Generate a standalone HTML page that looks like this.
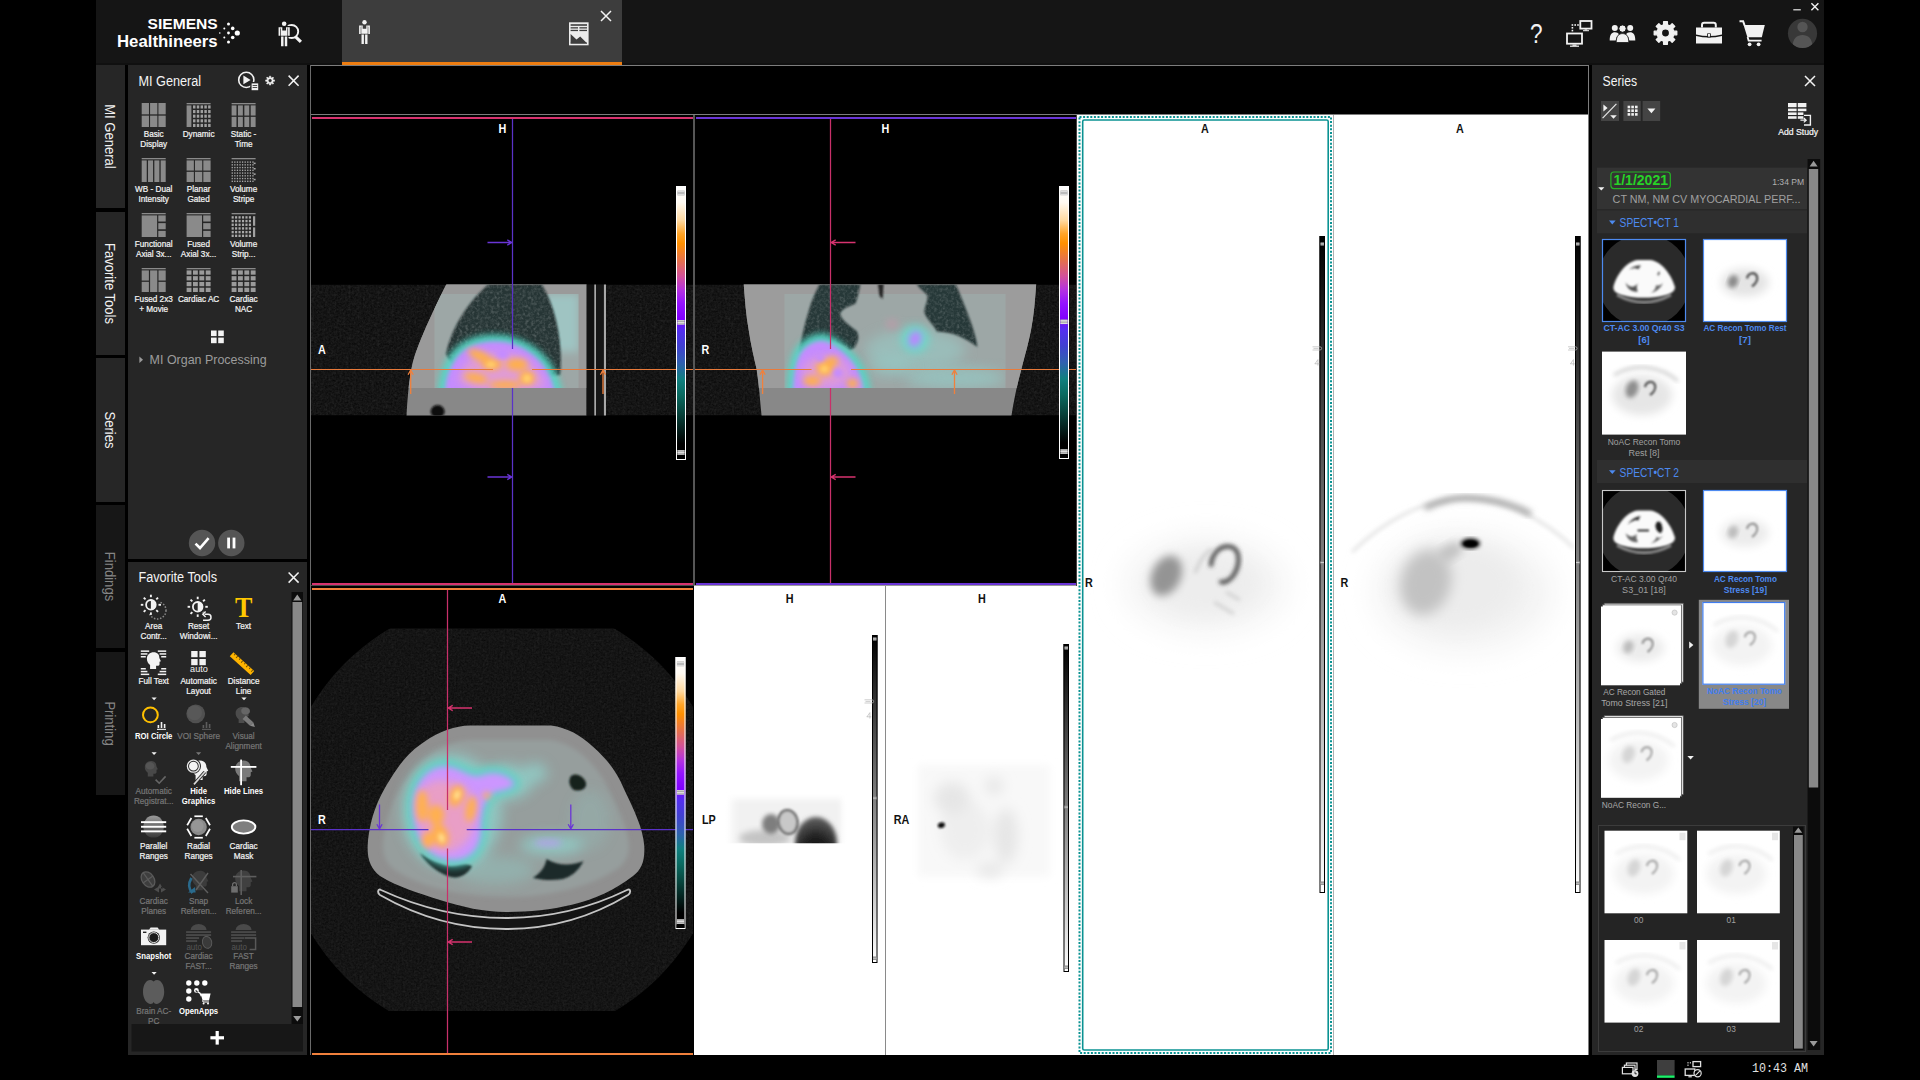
<!DOCTYPE html>
<html><head><meta charset="utf-8"><title>syngo.via MI General</title>
<style>
html,body{margin:0;padding:0;background:#000;width:1920px;height:1080px;overflow:hidden;font-family:"Liberation Sans",sans-serif;}
svg{display:block;position:absolute;left:0;top:0}
text{white-space:pre}
</style></head><body>
<svg width="1920" height="1080" viewBox="0 0 1920 1080">
<g id="p_frame">
<rect x="96" y="0" width="1728" height="65" fill="#151515" />
<rect x="96" y="63" width="1728" height="2" fill="#101010" />
<rect x="342" y="0" width="280" height="62" fill="#3d3d3d" />
<rect x="342" y="62" width="280" height="3" fill="#ee7d11" />
<rect x="96" y="65" width="29" height="143" fill="#262626" />
<g transform="translate(104.5,136.5) rotate(90)"><text x="-32.27" y="0.00" font-family="Liberation Sans, sans-serif" font-size="14.5" fill="#f2f2f2" textLength="64.54" lengthAdjust="spacingAndGlyphs" >MI General</text></g>
<rect x="96" y="212" width="29" height="143" fill="#262626" />
<g transform="translate(104.5,283.5) rotate(90)"><text x="-40.49" y="0.00" font-family="Liberation Sans, sans-serif" font-size="14.5" fill="#f2f2f2" textLength="80.99" lengthAdjust="spacingAndGlyphs" >Favorite Tools</text></g>
<rect x="96" y="358" width="29" height="144" fill="#262626" />
<g transform="translate(104.5,430.0) rotate(90)"><text x="-18.49" y="0.00" font-family="Liberation Sans, sans-serif" font-size="14.5" fill="#f2f2f2" textLength="36.99" lengthAdjust="spacingAndGlyphs" >Series</text></g>
<rect x="96" y="505" width="29" height="143" fill="#171717" />
<g transform="translate(104.5,576.5) rotate(90)"><text x="-24.66" y="0.00" font-family="Liberation Sans, sans-serif" font-size="14.5" fill="#858585" textLength="49.32" lengthAdjust="spacingAndGlyphs" >Findings</text></g>
<rect x="96" y="652" width="29" height="143" fill="#171717" />
<g transform="translate(104.5,723.5) rotate(90)"><text x="-22.12" y="0.00" font-family="Liberation Sans, sans-serif" font-size="14.5" fill="#858585" textLength="44.25" lengthAdjust="spacingAndGlyphs" >Printing</text></g>
<rect x="128" y="65" width="179" height="494" fill="#262626" />
<rect x="128" y="562" width="179" height="493" fill="#262626" />
<rect x="1592" y="65" width="232" height="990" fill="#262626" />
<rect x="310" y="65" width="1279" height="990" fill="#000" />
<rect x="310.5" y="65.5" width="1278" height="49" fill="none" stroke="#7d7d7d" stroke-width="1"/>
<line x1="310.5" y1="65" x2="310.5" y2="1055" stroke="#6a6a6a" stroke-width="1" />
</g>
<g id="p_top">
<text x="147.50" y="28.60" font-family="Liberation Sans, sans-serif" font-size="14.6" font-weight="bold" fill="#fff" textLength="70.20" lengthAdjust="spacingAndGlyphs" >SIEMENS</text>
<text x="117.00" y="46.60" font-family="Liberation Sans, sans-serif" font-size="16.6" font-weight="bold" fill="#fff" textLength="100.70" lengthAdjust="spacingAndGlyphs" >Healthineers</text>
<circle cx="228.5" cy="24" r="1.5" fill="#fff"/>
<circle cx="224.3" cy="28.4" r="1.0" fill="#fff"/>
<circle cx="232.7" cy="28.4" r="1.8" fill="#fff"/>
<circle cx="219.8" cy="33" r="0.8" fill="#fff"/>
<circle cx="228.5" cy="33" r="1.4" fill="#fff"/>
<circle cx="237.3" cy="33" r="2.6" fill="#fff"/>
<circle cx="224.3" cy="37.5" r="1.0" fill="#fff"/>
<circle cx="232.7" cy="37.5" r="1.8" fill="#fff"/>
<circle cx="228.5" cy="42" r="1.5" fill="#fff"/>
<circle cx="291.7" cy="31.5" r="6.5" fill="none" stroke="#f2f2f2" stroke-width="1.9"/>
<path d="M295.4,36.6 L300.9,41.8" stroke="#f2f2f2" stroke-width="3.2"/>
<g transform="translate(284.15,21.4) scale(1.0333333333333334)" fill="#151515" stroke="#151515" stroke-width="2.4">
<circle cx="0" cy="2.2" r="2.2"/>
<path d="M-5.4,5.6 h2.2 v1.2 h-0.6 v7.2 h-1.6z M5.4,5.6 h-2.2 v1.2 h0.6 v7.2 h1.6z"/>
<path d="M-3.2,5.6 h1.4 v3.2 h3.6 v-3.2 h1.4 v8.2 h-6.4z"/>
<path d="M-3.0,14.6 h2.4 v9.4 h-2.4z M0.6,14.6 h2.4 v9.4 h-2.4z"/>
</g>
<g transform="translate(284.15,21.4) scale(1.0333333333333334)" fill="#f2f2f2">
<circle cx="0" cy="2.2" r="2.2"/>
<path d="M-5.4,5.6 h2.2 v1.2 h-0.6 v7.2 h-1.6z M5.4,5.6 h-2.2 v1.2 h0.6 v7.2 h1.6z"/>
<path d="M-3.2,5.6 h1.4 v3.2 h3.6 v-3.2 h1.4 v8.2 h-6.4z"/>
<path d="M-3.0,14.6 h2.4 v9.4 h-2.4z M0.6,14.6 h2.4 v9.4 h-2.4z"/>
</g>
<g transform="translate(364.5,20) scale(1.0)" fill="#f2f2f2">
<circle cx="0" cy="2.2" r="2.2"/>
<path d="M-5.4,5.6 h2.2 v1.2 h-0.6 v7.2 h-1.6z M5.4,5.6 h-2.2 v1.2 h0.6 v7.2 h1.6z"/>
<path d="M-3.2,5.6 h1.4 v3.2 h3.6 v-3.2 h1.4 v8.2 h-6.4z"/>
<path d="M-3.0,14.6 h2.4 v9.4 h-2.4z M0.6,14.6 h2.4 v9.4 h-2.4z"/>
</g>
<rect x="569" y="22.3" width="19.6" height="23" fill="#ececec" />
<rect x="570.6" y="24.2" width="16.4" height="1.6" fill="#3d3d3d" />
<rect x="570.6" y="27.2" width="7.4" height="1.3" fill="#3d3d3d" />
<rect x="579.4" y="27.2" width="7.6" height="1.3" fill="#3d3d3d" />
<rect x="570.6" y="29.8" width="7.4" height="1.3" fill="#3d3d3d" />
<rect x="579.4" y="29.8" width="7.6" height="1.3" fill="#3d3d3d" />
<path d="M570.6,43.2 L570.6,34 L576.5,39.6 L580.2,36.6 L587,43.2Z" fill="#3d3d3d"/>
<rect x="570.6" y="42.6" width="16.4" height="1.1" fill="#3d3d3d" />
<path d="M601,11L611,21M611,11L601,21" stroke="#f2f2f2" stroke-width="1.5" fill="none"/>
<text x="1530.00" y="43.00" font-family="Liberation Sans, sans-serif" font-size="27" fill="#f2f2f2" textLength="12.60" lengthAdjust="spacingAndGlyphs" >?</text>
<g fill="none" stroke="#f2f2f2" stroke-width="1.8"><rect x="1567" y="33.5" width="15" height="10.2"/><rect x="1580.3" y="21" width="11.2" height="7.6"/></g>
<rect x="1572.5" y="44.6" width="4" height="1.2" fill="#f2f2f2" />
<rect x="1570" y="45.6" width="9" height="1.2" fill="#f2f2f2" />
<rect x="1584.6" y="29.4" width="2.6" height="1" fill="#f2f2f2" />
<rect x="1583" y="30.2" width="6" height="1" fill="#f2f2f2" />
<rect x="1571.6" y="24.2" width="1.6" height="1.6" fill="#f2f2f2" />
<rect x="1574.4" y="24.2" width="1.6" height="1.6" fill="#f2f2f2" />
<rect x="1577.2" y="24.2" width="1.6" height="1.6" fill="#f2f2f2" />
<rect x="1571.6" y="27" width="1.6" height="1.6" fill="#f2f2f2" />
<rect x="1571.6" y="29.8" width="1.6" height="1.6" fill="#f2f2f2" />
<g fill="#f2f2f2"><circle cx="1614.8" cy="28" r="3"/><circle cx="1630.2" cy="28" r="3"/><path d="M1609.7,40.5 C1609.7,34 1612,32.2 1614.8,32.2 C1617,32.2 1618.2,33 1619,34.2 C1617,36 1616,38 1615.8,40.5Z"/><path d="M1635.3,40.5 C1635.3,34 1633,32.2 1630.2,32.2 C1628,32.2 1626.8,33 1626,34.2 C1628,36 1629,38 1629.2,40.5Z"/><circle cx="1622.5" cy="28.6" r="3.7" stroke="#151515" stroke-width="1"/><path d="M1616.2,42.5 C1616.2,35.6 1619,33.6 1622.5,33.6 C1626,33.6 1628.8,35.6 1628.8,42.5Z" stroke="#151515" stroke-width="0.8"/></g>
<path d="M1673.73,31.14L1676.75,31.13L1676.75,34.87L1673.73,34.86L1672.64,37.50L1674.78,39.63L1672.13,42.28L1670.00,40.14L1667.36,41.23L1667.37,44.25L1663.63,44.25L1663.64,41.23L1661.00,40.14L1658.87,42.28L1656.22,39.63L1658.36,37.50L1657.27,34.86L1654.25,34.87L1654.25,31.13L1657.27,31.14L1658.36,28.50L1656.22,26.37L1658.87,23.72L1661.00,25.86L1663.64,24.77L1663.63,21.75L1667.37,21.75L1667.36,24.77L1670.00,25.86L1672.13,23.72L1674.78,26.37L1672.64,28.50ZM1669.60,33.00A4.10,4.10 0 1,0 1661.40,33.00A4.10,4.10 0 1,0 1669.60,33.00Z" fill="#f2f2f2" fill-rule="evenodd" stroke="#f2f2f2" stroke-width="1.37" stroke-linejoin="round"/>
<path d="M1702,27.5 v-2.6 q0,-2.2 2.2,-2.2 h9.4 q2.2,0 2.2,2.2 v2.6" fill="none" stroke="#f2f2f2" stroke-width="2"/>
<path d="M1696,27.5 h26 v7 q-13,3.2 -26,0z" fill="#f2f2f2"/>
<path d="M1696,36 q13,3.2 26,0 v7.6 h-26z" fill="#f2f2f2"/>
<rect x="1707.2" y="33.4" width="3.6" height="4" fill="#151515" />
<rect x="1708" y="34" width="2" height="2.6" fill="#f2f2f2" />
<path d="M1739.5,21.2 h3.6 l1.4,4" fill="none" stroke="#f2f2f2" stroke-width="2"/>
<path d="M1743.6,25 h21.2 l-3,12.2 h-14.4z" fill="#f2f2f2"/>
<path d="M1747.6,37 l1,3.6 h13" fill="none" stroke="#f2f2f2" stroke-width="1.8"/>
<circle cx="1749.6" cy="44.3" r="1.9" fill="#f2f2f2"/><circle cx="1758.6" cy="44.3" r="1.9" fill="#f2f2f2"/>
<clipPath id="av"><circle cx="1802.5" cy="33.4" r="14.6"/></clipPath>
<circle cx="1802.5" cy="33.4" r="14.6" fill="#383838"/>
<g clip-path="url(#av)" fill="#555"><circle cx="1802.5" cy="27" r="5.2"/><path d="M1792.5,48 C1792.5,38 1797,35 1802.5,35 C1808,35 1812.5,38 1812.5,48Z"/></g>
<rect x="1793.3" y="9.2" width="7.5" height="1.2" fill="#e8e8e8" />
<path d="M1811.4,3.2L1818.4,10.2M1818.4,3.2L1811.4,10.2" stroke="#f0f0f0" stroke-width="1.4" fill="none"/>
</g>
<g id="p_left">
<text x="138.40" y="85.80" font-family="Liberation Sans, sans-serif" font-size="14" fill="#f4f4f4" textLength="62.80" lengthAdjust="spacingAndGlyphs" >MI General</text>
<circle cx="246.3" cy="79.9" r="7.6" fill="none" stroke="#f2f2f2" stroke-width="1.6"/>
<path d="M243.4,75.6 L250.6,79.9 L243.4,84.2Z" fill="#f2f2f2"/>
<rect x="250.2" y="82" width="8.6" height="8.6" fill="#262626" />
<rect x="251.6" y="83.4" width="6.6" height="6.8" fill="#f2f2f2" />
<rect x="252.6" y="85.2" width="4.6" height="0.8" fill="#262626" />
<rect x="252.6" y="87.2" width="4.6" height="0.8" fill="#262626" />
<path d="M273.18,79.94L274.54,79.90L274.54,81.30L273.18,81.26L272.75,82.31L273.74,83.25L272.75,84.24L271.81,83.25L270.76,83.68L270.80,85.04L269.40,85.04L269.44,83.68L268.39,83.25L267.45,84.24L266.46,83.25L267.45,82.31L267.02,81.26L265.66,81.30L265.66,79.90L267.02,79.94L267.45,78.89L266.46,77.95L267.45,76.96L268.39,77.95L269.44,77.52L269.40,76.16L270.80,76.16L270.76,77.52L271.81,77.95L272.75,76.96L273.74,77.95L272.75,78.89ZM271.99,80.60A1.89,1.89 0 1,0 268.21,80.60A1.89,1.89 0 1,0 271.99,80.60Z" fill="#f2f2f2" fill-rule="evenodd" stroke="#f2f2f2" stroke-width="0.54" stroke-linejoin="round"/>
<path d="M288.6,75.6L298.6,85.8M298.6,75.6L288.6,85.8" stroke="#f2f2f2" stroke-width="1.5" fill="none"/>
<rect x="141.70" y="103.00" width="7.27" height="11.35" fill="#8a8a8a"/><rect x="150.07" y="103.00" width="7.27" height="11.35" fill="#8a8a8a"/><rect x="158.43" y="103.00" width="7.27" height="11.35" fill="#8a8a8a"/><rect x="141.70" y="115.65" width="7.27" height="11.35" fill="#8a8a8a"/><rect x="150.07" y="115.65" width="7.27" height="11.35" fill="#8a8a8a"/><rect x="158.43" y="115.65" width="7.27" height="11.35" fill="#8a8a8a"/>
<text x="143.69" y="136.90" font-family="Liberation Sans, sans-serif" font-size="8.8" fill="#f4f4f4" textLength="20.01" lengthAdjust="spacingAndGlyphs" stroke="#f4f4f4" stroke-width="0.22">Basic</text><text x="140.28" y="146.80" font-family="Liberation Sans, sans-serif" font-size="8.8" fill="#f4f4f4" textLength="26.83" lengthAdjust="spacingAndGlyphs" stroke="#f4f4f4" stroke-width="0.22">Display</text>
<rect x="186.6" y="103" width="24" height="1.3" fill="#8a8a8a"/><rect x="186.60" y="105.40" width="4.80" height="21.60" fill="#8a8a8a"/><rect x="193.00" y="105.40" width="2.48" height="3.12" fill="#a0a0a0"/><rect x="196.78" y="105.40" width="2.48" height="3.12" fill="#a0a0a0"/><rect x="200.56" y="105.40" width="2.48" height="3.12" fill="#a0a0a0"/><rect x="204.34" y="105.40" width="2.48" height="3.12" fill="#a0a0a0"/><rect x="208.12" y="105.40" width="2.48" height="3.12" fill="#a0a0a0"/><rect x="193.00" y="110.02" width="2.48" height="3.12" fill="#a0a0a0"/><rect x="196.78" y="110.02" width="2.48" height="3.12" fill="#a0a0a0"/><rect x="200.56" y="110.02" width="2.48" height="3.12" fill="#a0a0a0"/><rect x="204.34" y="110.02" width="2.48" height="3.12" fill="#a0a0a0"/><rect x="208.12" y="110.02" width="2.48" height="3.12" fill="#a0a0a0"/><rect x="193.00" y="114.64" width="2.48" height="3.12" fill="#a0a0a0"/><rect x="196.78" y="114.64" width="2.48" height="3.12" fill="#a0a0a0"/><rect x="200.56" y="114.64" width="2.48" height="3.12" fill="#a0a0a0"/><rect x="204.34" y="114.64" width="2.48" height="3.12" fill="#a0a0a0"/><rect x="208.12" y="114.64" width="2.48" height="3.12" fill="#a0a0a0"/><rect x="193.00" y="119.26" width="2.48" height="3.12" fill="#a0a0a0"/><rect x="196.78" y="119.26" width="2.48" height="3.12" fill="#a0a0a0"/><rect x="200.56" y="119.26" width="2.48" height="3.12" fill="#a0a0a0"/><rect x="204.34" y="119.26" width="2.48" height="3.12" fill="#a0a0a0"/><rect x="208.12" y="119.26" width="2.48" height="3.12" fill="#a0a0a0"/><rect x="193.00" y="123.88" width="2.48" height="3.12" fill="#a0a0a0"/><rect x="196.78" y="123.88" width="2.48" height="3.12" fill="#a0a0a0"/><rect x="200.56" y="123.88" width="2.48" height="3.12" fill="#a0a0a0"/><rect x="204.34" y="123.88" width="2.48" height="3.12" fill="#a0a0a0"/><rect x="208.12" y="123.88" width="2.48" height="3.12" fill="#a0a0a0"/>
<text x="182.68" y="136.90" font-family="Liberation Sans, sans-serif" font-size="8.8" fill="#f4f4f4" textLength="31.83" lengthAdjust="spacingAndGlyphs" stroke="#f4f4f4" stroke-width="0.22">Dynamic</text>
<rect x="231.6" y="103" width="24" height="1.3" fill="#8a8a8a"/><rect x="231.60" y="105.40" width="4.88" height="10.15" fill="#8a8a8a"/><rect x="237.97" y="105.40" width="4.88" height="10.15" fill="#8a8a8a"/><rect x="244.35" y="105.40" width="4.88" height="10.15" fill="#8a8a8a"/><rect x="250.72" y="105.40" width="4.88" height="10.15" fill="#8a8a8a"/><rect x="231.60" y="116.85" width="4.88" height="10.15" fill="#8a8a8a"/><rect x="237.97" y="116.85" width="4.88" height="10.15" fill="#8a8a8a"/><rect x="244.35" y="116.85" width="4.88" height="10.15" fill="#8a8a8a"/><rect x="250.72" y="116.85" width="4.88" height="10.15" fill="#8a8a8a"/>
<text x="230.87" y="136.90" font-family="Liberation Sans, sans-serif" font-size="8.8" fill="#f4f4f4" textLength="25.47" lengthAdjust="spacingAndGlyphs" stroke="#f4f4f4" stroke-width="0.22">Static -</text><text x="234.66" y="146.80" font-family="Liberation Sans, sans-serif" font-size="8.8" fill="#f4f4f4" textLength="17.88" lengthAdjust="spacingAndGlyphs" stroke="#f4f4f4" stroke-width="0.22">Time</text>
<rect x="141.7" y="158" width="24" height="1.3" fill="#8a8a8a"/><rect x="141.70" y="160.40" width="5.03" height="21.60" fill="#8a8a8a"/><rect x="148.02" y="160.40" width="5.03" height="21.60" fill="#8a8a8a"/><rect x="154.35" y="160.40" width="5.03" height="21.60" fill="#8a8a8a"/><rect x="160.67" y="160.40" width="5.03" height="21.60" fill="#8a8a8a"/>
<text x="135.06" y="191.90" font-family="Liberation Sans, sans-serif" font-size="8.8" fill="#f4f4f4" textLength="37.29" lengthAdjust="spacingAndGlyphs" stroke="#f4f4f4" stroke-width="0.22">WB - Dual</text><text x="138.46" y="201.80" font-family="Liberation Sans, sans-serif" font-size="8.8" fill="#f4f4f4" textLength="30.48" lengthAdjust="spacingAndGlyphs" stroke="#f4f4f4" stroke-width="0.22">Intensity</text>
<rect x="186.6" y="158" width="24" height="1.3" fill="#8a8a8a"/><rect x="186.60" y="160.40" width="7.27" height="10.15" fill="#8a8a8a"/><rect x="194.97" y="160.40" width="7.27" height="10.15" fill="#8a8a8a"/><rect x="203.33" y="160.40" width="7.27" height="10.15" fill="#8a8a8a"/><rect x="186.60" y="171.85" width="7.27" height="10.15" fill="#8a8a8a"/><rect x="194.97" y="171.85" width="7.27" height="10.15" fill="#8a8a8a"/><rect x="203.33" y="171.85" width="7.27" height="10.15" fill="#8a8a8a"/>
<text x="186.77" y="191.90" font-family="Liberation Sans, sans-serif" font-size="8.8" fill="#f4f4f4" textLength="23.66" lengthAdjust="spacingAndGlyphs" stroke="#f4f4f4" stroke-width="0.22">Planar</text><text x="187.45" y="201.80" font-family="Liberation Sans, sans-serif" font-size="8.8" fill="#f4f4f4" textLength="22.29" lengthAdjust="spacingAndGlyphs" stroke="#f4f4f4" stroke-width="0.22">Gated</text>
<rect x="231.6" y="158" width="24" height="1.3" fill="#8a8a8a"/><rect x="231.60" y="161.40" width="1.29" height="1.39" fill="#a8a8a8"/><rect x="234.19" y="161.40" width="1.29" height="1.39" fill="#a8a8a8"/><rect x="236.78" y="161.40" width="1.29" height="1.39" fill="#a8a8a8"/><rect x="239.37" y="161.40" width="1.29" height="1.39" fill="#a8a8a8"/><rect x="241.96" y="161.40" width="1.29" height="1.39" fill="#a8a8a8"/><rect x="244.54" y="161.40" width="1.29" height="1.39" fill="#a8a8a8"/><rect x="247.13" y="161.40" width="1.29" height="1.39" fill="#a8a8a8"/><rect x="249.72" y="161.40" width="1.29" height="1.39" fill="#a8a8a8"/><rect x="252.31" y="161.40" width="1.29" height="1.39" fill="#a8a8a8"/><rect x="231.60" y="164.14" width="1.29" height="1.39" fill="#a8a8a8"/><rect x="234.19" y="164.14" width="1.29" height="1.39" fill="#a8a8a8"/><rect x="236.78" y="164.14" width="1.29" height="1.39" fill="#a8a8a8"/><rect x="239.37" y="164.14" width="1.29" height="1.39" fill="#a8a8a8"/><rect x="241.96" y="164.14" width="1.29" height="1.39" fill="#a8a8a8"/><rect x="244.54" y="164.14" width="1.29" height="1.39" fill="#a8a8a8"/><rect x="247.13" y="164.14" width="1.29" height="1.39" fill="#a8a8a8"/><rect x="249.72" y="164.14" width="1.29" height="1.39" fill="#a8a8a8"/><rect x="252.31" y="164.14" width="1.29" height="1.39" fill="#a8a8a8"/><rect x="231.60" y="166.89" width="1.29" height="1.39" fill="#a8a8a8"/><rect x="234.19" y="166.89" width="1.29" height="1.39" fill="#a8a8a8"/><rect x="236.78" y="166.89" width="1.29" height="1.39" fill="#a8a8a8"/><rect x="239.37" y="166.89" width="1.29" height="1.39" fill="#a8a8a8"/><rect x="241.96" y="166.89" width="1.29" height="1.39" fill="#a8a8a8"/><rect x="244.54" y="166.89" width="1.29" height="1.39" fill="#a8a8a8"/><rect x="247.13" y="166.89" width="1.29" height="1.39" fill="#a8a8a8"/><rect x="249.72" y="166.89" width="1.29" height="1.39" fill="#a8a8a8"/><rect x="252.31" y="166.89" width="1.29" height="1.39" fill="#a8a8a8"/><rect x="231.60" y="169.63" width="1.29" height="1.39" fill="#a8a8a8"/><rect x="234.19" y="169.63" width="1.29" height="1.39" fill="#a8a8a8"/><rect x="236.78" y="169.63" width="1.29" height="1.39" fill="#a8a8a8"/><rect x="239.37" y="169.63" width="1.29" height="1.39" fill="#a8a8a8"/><rect x="241.96" y="169.63" width="1.29" height="1.39" fill="#a8a8a8"/><rect x="244.54" y="169.63" width="1.29" height="1.39" fill="#a8a8a8"/><rect x="247.13" y="169.63" width="1.29" height="1.39" fill="#a8a8a8"/><rect x="249.72" y="169.63" width="1.29" height="1.39" fill="#a8a8a8"/><rect x="252.31" y="169.63" width="1.29" height="1.39" fill="#a8a8a8"/><rect x="231.60" y="172.38" width="1.29" height="1.39" fill="#a8a8a8"/><rect x="234.19" y="172.38" width="1.29" height="1.39" fill="#a8a8a8"/><rect x="236.78" y="172.38" width="1.29" height="1.39" fill="#a8a8a8"/><rect x="239.37" y="172.38" width="1.29" height="1.39" fill="#a8a8a8"/><rect x="241.96" y="172.38" width="1.29" height="1.39" fill="#a8a8a8"/><rect x="244.54" y="172.38" width="1.29" height="1.39" fill="#a8a8a8"/><rect x="247.13" y="172.38" width="1.29" height="1.39" fill="#a8a8a8"/><rect x="249.72" y="172.38" width="1.29" height="1.39" fill="#a8a8a8"/><rect x="252.31" y="172.38" width="1.29" height="1.39" fill="#a8a8a8"/><rect x="231.60" y="175.12" width="1.29" height="1.39" fill="#a8a8a8"/><rect x="234.19" y="175.12" width="1.29" height="1.39" fill="#a8a8a8"/><rect x="236.78" y="175.12" width="1.29" height="1.39" fill="#a8a8a8"/><rect x="239.37" y="175.12" width="1.29" height="1.39" fill="#a8a8a8"/><rect x="241.96" y="175.12" width="1.29" height="1.39" fill="#a8a8a8"/><rect x="244.54" y="175.12" width="1.29" height="1.39" fill="#a8a8a8"/><rect x="247.13" y="175.12" width="1.29" height="1.39" fill="#a8a8a8"/><rect x="249.72" y="175.12" width="1.29" height="1.39" fill="#a8a8a8"/><rect x="252.31" y="175.12" width="1.29" height="1.39" fill="#a8a8a8"/><rect x="231.60" y="177.86" width="1.29" height="1.39" fill="#a8a8a8"/><rect x="234.19" y="177.86" width="1.29" height="1.39" fill="#a8a8a8"/><rect x="236.78" y="177.86" width="1.29" height="1.39" fill="#a8a8a8"/><rect x="239.37" y="177.86" width="1.29" height="1.39" fill="#a8a8a8"/><rect x="241.96" y="177.86" width="1.29" height="1.39" fill="#a8a8a8"/><rect x="244.54" y="177.86" width="1.29" height="1.39" fill="#a8a8a8"/><rect x="247.13" y="177.86" width="1.29" height="1.39" fill="#a8a8a8"/><rect x="249.72" y="177.86" width="1.29" height="1.39" fill="#a8a8a8"/><rect x="252.31" y="177.86" width="1.29" height="1.39" fill="#a8a8a8"/><rect x="231.60" y="180.61" width="1.29" height="1.39" fill="#a8a8a8"/><rect x="234.19" y="180.61" width="1.29" height="1.39" fill="#a8a8a8"/><rect x="236.78" y="180.61" width="1.29" height="1.39" fill="#a8a8a8"/><rect x="239.37" y="180.61" width="1.29" height="1.39" fill="#a8a8a8"/><rect x="241.96" y="180.61" width="1.29" height="1.39" fill="#a8a8a8"/><rect x="244.54" y="180.61" width="1.29" height="1.39" fill="#a8a8a8"/><rect x="247.13" y="180.61" width="1.29" height="1.39" fill="#a8a8a8"/><rect x="249.72" y="180.61" width="1.29" height="1.39" fill="#a8a8a8"/><rect x="252.31" y="180.61" width="1.29" height="1.39" fill="#a8a8a8"/><rect x="253.60" y="162.60" width="2.00" height="1.50" fill="#a8a8a8"/><rect x="253.60" y="168.00" width="2.00" height="1.50" fill="#a8a8a8"/><rect x="253.60" y="173.40" width="2.00" height="1.50" fill="#a8a8a8"/><rect x="253.60" y="178.80" width="2.00" height="1.50" fill="#a8a8a8"/>
<text x="229.95" y="191.90" font-family="Liberation Sans, sans-serif" font-size="8.8" fill="#f4f4f4" textLength="27.30" lengthAdjust="spacingAndGlyphs" stroke="#f4f4f4" stroke-width="0.22">Volume</text><text x="232.91" y="201.80" font-family="Liberation Sans, sans-serif" font-size="8.8" fill="#f4f4f4" textLength="21.38" lengthAdjust="spacingAndGlyphs" stroke="#f4f4f4" stroke-width="0.22">Stripe</text>
<rect x="141.7" y="213" width="24" height="1.3" fill="#8a8a8a"/><rect x="141.70" y="215.40" width="15.40" height="21.60" fill="#8a8a8a"/><rect x="158.30" y="215.40" width="7.40" height="6.13" fill="#8a8a8a"/><rect x="158.30" y="223.13" width="7.40" height="6.13" fill="#8a8a8a"/><rect x="158.30" y="230.87" width="7.40" height="6.13" fill="#8a8a8a"/>
<text x="134.82" y="246.90" font-family="Liberation Sans, sans-serif" font-size="8.8" fill="#f4f4f4" textLength="37.76" lengthAdjust="spacingAndGlyphs" stroke="#f4f4f4" stroke-width="0.22">Functional</text><text x="135.96" y="256.80" font-family="Liberation Sans, sans-serif" font-size="8.8" fill="#f4f4f4" textLength="35.48" lengthAdjust="spacingAndGlyphs" stroke="#f4f4f4" stroke-width="0.22">Axial 3x...</text>
<rect x="186.6" y="213" width="24" height="1.3" fill="#8a8a8a"/><rect x="186.60" y="215.40" width="15.40" height="21.60" fill="#8a8a8a"/><rect x="203.20" y="215.40" width="7.40" height="6.13" fill="#8a8a8a"/><rect x="203.20" y="223.13" width="7.40" height="6.13" fill="#8a8a8a"/><rect x="203.20" y="230.87" width="7.40" height="6.13" fill="#8a8a8a"/>
<text x="187.23" y="246.90" font-family="Liberation Sans, sans-serif" font-size="8.8" fill="#f4f4f4" textLength="22.74" lengthAdjust="spacingAndGlyphs" stroke="#f4f4f4" stroke-width="0.22">Fused</text><text x="180.86" y="256.80" font-family="Liberation Sans, sans-serif" font-size="8.8" fill="#f4f4f4" textLength="35.48" lengthAdjust="spacingAndGlyphs" stroke="#f4f4f4" stroke-width="0.22">Axial 3x...</text>
<rect x="231.6" y="213" width="24" height="1.3" fill="#8a8a8a"/><rect x="231.60" y="216.20" width="2.15" height="2.38" fill="#a8a8a8"/><rect x="235.05" y="216.20" width="2.15" height="2.38" fill="#a8a8a8"/><rect x="238.50" y="216.20" width="2.15" height="2.38" fill="#a8a8a8"/><rect x="241.95" y="216.20" width="2.15" height="2.38" fill="#a8a8a8"/><rect x="245.40" y="216.20" width="2.15" height="2.38" fill="#a8a8a8"/><rect x="248.85" y="216.20" width="2.15" height="2.38" fill="#a8a8a8"/><rect x="231.60" y="219.88" width="2.15" height="2.38" fill="#a8a8a8"/><rect x="235.05" y="219.88" width="2.15" height="2.38" fill="#a8a8a8"/><rect x="238.50" y="219.88" width="2.15" height="2.38" fill="#a8a8a8"/><rect x="241.95" y="219.88" width="2.15" height="2.38" fill="#a8a8a8"/><rect x="245.40" y="219.88" width="2.15" height="2.38" fill="#a8a8a8"/><rect x="248.85" y="219.88" width="2.15" height="2.38" fill="#a8a8a8"/><rect x="231.60" y="223.57" width="2.15" height="2.38" fill="#a8a8a8"/><rect x="235.05" y="223.57" width="2.15" height="2.38" fill="#a8a8a8"/><rect x="238.50" y="223.57" width="2.15" height="2.38" fill="#a8a8a8"/><rect x="241.95" y="223.57" width="2.15" height="2.38" fill="#a8a8a8"/><rect x="245.40" y="223.57" width="2.15" height="2.38" fill="#a8a8a8"/><rect x="248.85" y="223.57" width="2.15" height="2.38" fill="#a8a8a8"/><rect x="231.60" y="227.25" width="2.15" height="2.38" fill="#a8a8a8"/><rect x="235.05" y="227.25" width="2.15" height="2.38" fill="#a8a8a8"/><rect x="238.50" y="227.25" width="2.15" height="2.38" fill="#a8a8a8"/><rect x="241.95" y="227.25" width="2.15" height="2.38" fill="#a8a8a8"/><rect x="245.40" y="227.25" width="2.15" height="2.38" fill="#a8a8a8"/><rect x="248.85" y="227.25" width="2.15" height="2.38" fill="#a8a8a8"/><rect x="231.60" y="230.93" width="2.15" height="2.38" fill="#a8a8a8"/><rect x="235.05" y="230.93" width="2.15" height="2.38" fill="#a8a8a8"/><rect x="238.50" y="230.93" width="2.15" height="2.38" fill="#a8a8a8"/><rect x="241.95" y="230.93" width="2.15" height="2.38" fill="#a8a8a8"/><rect x="245.40" y="230.93" width="2.15" height="2.38" fill="#a8a8a8"/><rect x="248.85" y="230.93" width="2.15" height="2.38" fill="#a8a8a8"/><rect x="231.60" y="234.62" width="2.15" height="2.38" fill="#a8a8a8"/><rect x="235.05" y="234.62" width="2.15" height="2.38" fill="#a8a8a8"/><rect x="238.50" y="234.62" width="2.15" height="2.38" fill="#a8a8a8"/><rect x="241.95" y="234.62" width="2.15" height="2.38" fill="#a8a8a8"/><rect x="245.40" y="234.62" width="2.15" height="2.38" fill="#a8a8a8"/><rect x="248.85" y="234.62" width="2.15" height="2.38" fill="#a8a8a8"/><rect x="253.00" y="216.20" width="2.20" height="9.60" fill="#a0a0a0"/><rect x="253.00" y="227.40" width="2.20" height="9.60" fill="#a0a0a0"/>
<text x="229.95" y="246.90" font-family="Liberation Sans, sans-serif" font-size="8.8" fill="#f4f4f4" textLength="27.30" lengthAdjust="spacingAndGlyphs" stroke="#f4f4f4" stroke-width="0.22">Volume</text><text x="231.78" y="256.80" font-family="Liberation Sans, sans-serif" font-size="8.8" fill="#f4f4f4" textLength="23.65" lengthAdjust="spacingAndGlyphs" stroke="#f4f4f4" stroke-width="0.22">Strip...</text>
<rect x="141.7" y="268" width="24" height="1.3" fill="#8a8a8a"/><rect x="141.70" y="270.40" width="7.20" height="10.15" fill="#8a8a8a"/><rect x="158.50" y="270.40" width="7.20" height="10.15" fill="#8a8a8a"/><rect x="141.70" y="281.85" width="7.20" height="10.15" fill="#8a8a8a"/><rect x="158.50" y="281.85" width="7.20" height="10.15" fill="#8a8a8a"/><rect x="150.10" y="270.40" width="7.20" height="21.60" fill="#8a8a8a"/>
<text x="134.59" y="301.90" font-family="Liberation Sans, sans-serif" font-size="8.8" fill="#f4f4f4" textLength="38.21" lengthAdjust="spacingAndGlyphs" stroke="#f4f4f4" stroke-width="0.22">Fused 2x3</text><text x="139.26" y="311.80" font-family="Liberation Sans, sans-serif" font-size="8.8" fill="#f4f4f4" textLength="28.88" lengthAdjust="spacingAndGlyphs" stroke="#f4f4f4" stroke-width="0.22">+ Movie</text>
<rect x="186.6" y="268" width="24" height="1.3" fill="#8a8a8a"/><rect x="186.60" y="270.40" width="4.88" height="4.28" fill="#9a9a9a"/><rect x="192.97" y="270.40" width="4.88" height="4.28" fill="#9a9a9a"/><rect x="199.35" y="270.40" width="4.88" height="4.28" fill="#9a9a9a"/><rect x="205.72" y="270.40" width="4.88" height="4.28" fill="#9a9a9a"/><rect x="186.60" y="276.17" width="4.88" height="4.28" fill="#9a9a9a"/><rect x="192.97" y="276.17" width="4.88" height="4.28" fill="#9a9a9a"/><rect x="199.35" y="276.17" width="4.88" height="4.28" fill="#9a9a9a"/><rect x="205.72" y="276.17" width="4.88" height="4.28" fill="#9a9a9a"/><rect x="186.60" y="281.95" width="4.88" height="4.28" fill="#9a9a9a"/><rect x="192.97" y="281.95" width="4.88" height="4.28" fill="#9a9a9a"/><rect x="199.35" y="281.95" width="4.88" height="4.28" fill="#9a9a9a"/><rect x="205.72" y="281.95" width="4.88" height="4.28" fill="#9a9a9a"/><rect x="186.60" y="287.72" width="4.88" height="4.28" fill="#9a9a9a"/><rect x="192.97" y="287.72" width="4.88" height="4.28" fill="#9a9a9a"/><rect x="199.35" y="287.72" width="4.88" height="4.28" fill="#9a9a9a"/><rect x="205.72" y="287.72" width="4.88" height="4.28" fill="#9a9a9a"/>
<text x="177.90" y="301.90" font-family="Liberation Sans, sans-serif" font-size="8.8" fill="#f4f4f4" textLength="41.39" lengthAdjust="spacingAndGlyphs" stroke="#f4f4f4" stroke-width="0.22">Cardiac AC</text>
<rect x="231.6" y="268" width="24" height="1.3" fill="#8a8a8a"/><rect x="231.60" y="270.40" width="4.88" height="4.28" fill="#9a9a9a"/><rect x="237.97" y="270.40" width="4.88" height="4.28" fill="#9a9a9a"/><rect x="244.35" y="270.40" width="4.88" height="4.28" fill="#9a9a9a"/><rect x="250.72" y="270.40" width="4.88" height="4.28" fill="#9a9a9a"/><rect x="231.60" y="276.17" width="4.88" height="4.28" fill="#9a9a9a"/><rect x="237.97" y="276.17" width="4.88" height="4.28" fill="#9a9a9a"/><rect x="244.35" y="276.17" width="4.88" height="4.28" fill="#9a9a9a"/><rect x="250.72" y="276.17" width="4.88" height="4.28" fill="#9a9a9a"/><rect x="231.60" y="281.95" width="4.88" height="4.28" fill="#9a9a9a"/><rect x="237.97" y="281.95" width="4.88" height="4.28" fill="#9a9a9a"/><rect x="244.35" y="281.95" width="4.88" height="4.28" fill="#9a9a9a"/><rect x="250.72" y="281.95" width="4.88" height="4.28" fill="#9a9a9a"/><rect x="231.60" y="287.72" width="4.88" height="4.28" fill="#9a9a9a"/><rect x="237.97" y="287.72" width="4.88" height="4.28" fill="#9a9a9a"/><rect x="244.35" y="287.72" width="4.88" height="4.28" fill="#9a9a9a"/><rect x="250.72" y="287.72" width="4.88" height="4.28" fill="#9a9a9a"/>
<text x="229.50" y="301.90" font-family="Liberation Sans, sans-serif" font-size="8.8" fill="#f4f4f4" textLength="28.20" lengthAdjust="spacingAndGlyphs" stroke="#f4f4f4" stroke-width="0.22">Cardiac</text><text x="234.96" y="311.80" font-family="Liberation Sans, sans-serif" font-size="8.8" fill="#f4f4f4" textLength="17.28" lengthAdjust="spacingAndGlyphs" stroke="#f4f4f4" stroke-width="0.22">NAC</text>
<rect x="211" y="330.5" width="5.6" height="5.6" fill="#f2f2f2" />
<rect x="218.2" y="330.5" width="5.6" height="5.6" fill="#f2f2f2" />
<rect x="211" y="337.6" width="5.6" height="5.6" fill="#f2f2f2" />
<rect x="218.2" y="337.6" width="5.6" height="5.6" fill="#f2f2f2" />
<path d="M139.4,356.6 l3.6,3.2 l-3.6,3.2z" fill="#9a9a9a"/>
<text x="149.60" y="364.20" font-family="Liberation Sans, sans-serif" font-size="13.6" fill="#9c9c9c" textLength="117.00" lengthAdjust="spacingAndGlyphs" >MI Organ Processing</text>
<circle cx="202" cy="543" r="13.2" fill="#555"/><circle cx="231.3" cy="543" r="13.2" fill="#555"/>
<path d="M195.5,543.6 L200,548 L208.6,538.2" fill="none" stroke="#fff" stroke-width="2.6"/>
<rect x="227.2" y="537.6" width="2.8" height="10.8" fill="#fff" />
<rect x="232.6" y="537.6" width="2.8" height="10.8" fill="#fff" />
<text x="138.40" y="582.40" font-family="Liberation Sans, sans-serif" font-size="14" fill="#f4f4f4" textLength="78.60" lengthAdjust="spacingAndGlyphs" >Favorite Tools</text>
<path d="M288.6,572.4L298.6,582.6M298.6,572.4L288.6,582.6" stroke="#f2f2f2" stroke-width="1.5" fill="none"/>
<rect x="291.5" y="592" width="11.5" height="432" fill="#0c0c0c" />
<rect x="292.5" y="602" width="9.6" height="405" fill="#888" />
<path d="M293.2,600.6 L297.3,594.6 L301.4,600.6Z" fill="#9a9a9a"/>
<path d="M293.2,1016 L297.3,1021.4 L301.4,1016Z" fill="#9a9a9a"/>
<rect x="131.5" y="1024" width="171.5" height="27.5" fill="#171717" />
<rect x="215.6" y="1031" width="3.2" height="13.6" fill="#fff" />
<rect x="210.4" y="1036.2" width="13.6" height="3.2" fill="#fff" />
<text x="145.06" y="629.00" font-family="Liberation Sans, sans-serif" font-size="8.8" fill="#f4f4f4" textLength="17.29" lengthAdjust="spacingAndGlyphs" stroke="#f4f4f4" stroke-width="0.22">Area</text><text x="140.51" y="638.90" font-family="Liberation Sans, sans-serif" font-size="8.8" fill="#f4f4f4" textLength="26.38" lengthAdjust="spacingAndGlyphs" stroke="#f4f4f4" stroke-width="0.22">Contr...</text>
<text x="187.91" y="629.00" font-family="Liberation Sans, sans-serif" font-size="8.8" fill="#f4f4f4" textLength="21.38" lengthAdjust="spacingAndGlyphs" stroke="#f4f4f4" stroke-width="0.22">Reset</text><text x="179.73" y="638.90" font-family="Liberation Sans, sans-serif" font-size="8.8" fill="#f4f4f4" textLength="37.75" lengthAdjust="spacingAndGlyphs" stroke="#f4f4f4" stroke-width="0.22">Windowi...</text>
<text x="236.10" y="629.00" font-family="Liberation Sans, sans-serif" font-size="8.8" fill="#f4f4f4" textLength="15.01" lengthAdjust="spacingAndGlyphs" stroke="#f4f4f4" stroke-width="0.22">Text</text>
<text x="138.54" y="684.00" font-family="Liberation Sans, sans-serif" font-size="8.8" fill="#f4f4f4" textLength="30.32" lengthAdjust="spacingAndGlyphs" stroke="#f4f4f4" stroke-width="0.22">Full Text</text>
<text x="180.41" y="684.00" font-family="Liberation Sans, sans-serif" font-size="8.8" fill="#f4f4f4" textLength="36.39" lengthAdjust="spacingAndGlyphs" stroke="#f4f4f4" stroke-width="0.22">Automatic</text><text x="186.32" y="693.90" font-family="Liberation Sans, sans-serif" font-size="8.8" fill="#f4f4f4" textLength="24.57" lengthAdjust="spacingAndGlyphs" stroke="#f4f4f4" stroke-width="0.22">Layout</text>
<text x="227.68" y="684.00" font-family="Liberation Sans, sans-serif" font-size="8.8" fill="#f4f4f4" textLength="31.84" lengthAdjust="spacingAndGlyphs" stroke="#f4f4f4" stroke-width="0.22">Distance</text><text x="235.86" y="693.90" font-family="Liberation Sans, sans-serif" font-size="8.8" fill="#f4f4f4" textLength="15.47" lengthAdjust="spacingAndGlyphs" stroke="#f4f4f4" stroke-width="0.22">Line</text>
<text x="134.99" y="739.00" font-family="Liberation Sans, sans-serif" font-size="8.6" font-weight="bold" fill="#fff" textLength="37.42" lengthAdjust="spacingAndGlyphs" >ROI Circle</text>
<text x="177.22" y="739.00" font-family="Liberation Sans, sans-serif" font-size="8.8" fill="#777" textLength="42.76" lengthAdjust="spacingAndGlyphs" stroke="#777" stroke-width="0.22">VOI Sphere</text>
<text x="232.53" y="739.00" font-family="Liberation Sans, sans-serif" font-size="8.8" fill="#777" textLength="22.14" lengthAdjust="spacingAndGlyphs" stroke="#777" stroke-width="0.22">Visual</text><text x="225.40" y="748.90" font-family="Liberation Sans, sans-serif" font-size="8.8" fill="#777" textLength="36.39" lengthAdjust="spacingAndGlyphs" stroke="#777" stroke-width="0.22">Alignment</text>
<text x="135.51" y="794.00" font-family="Liberation Sans, sans-serif" font-size="8.8" fill="#777" textLength="36.39" lengthAdjust="spacingAndGlyphs" stroke="#777" stroke-width="0.22">Automatic</text><text x="133.92" y="803.90" font-family="Liberation Sans, sans-serif" font-size="8.8" fill="#777" textLength="39.57" lengthAdjust="spacingAndGlyphs" stroke="#777" stroke-width="0.22">Registrat...</text>
<text x="190.21" y="794.00" font-family="Liberation Sans, sans-serif" font-size="8.6" font-weight="bold" fill="#fff" textLength="16.77" lengthAdjust="spacingAndGlyphs" >Hide</text><text x="181.82" y="803.90" font-family="Liberation Sans, sans-serif" font-size="8.6" font-weight="bold" fill="#fff" textLength="33.55" lengthAdjust="spacingAndGlyphs" >Graphics</text>
<text x="224.03" y="794.00" font-family="Liberation Sans, sans-serif" font-size="8.6" font-weight="bold" fill="#fff" textLength="39.14" lengthAdjust="spacingAndGlyphs" >Hide Lines</text>
<text x="140.05" y="849.00" font-family="Liberation Sans, sans-serif" font-size="8.8" fill="#f4f4f4" textLength="27.29" lengthAdjust="spacingAndGlyphs" stroke="#f4f4f4" stroke-width="0.22">Parallel</text><text x="139.60" y="858.90" font-family="Liberation Sans, sans-serif" font-size="8.8" fill="#f4f4f4" textLength="28.21" lengthAdjust="spacingAndGlyphs" stroke="#f4f4f4" stroke-width="0.22">Ranges</text>
<text x="187.00" y="849.00" font-family="Liberation Sans, sans-serif" font-size="8.8" fill="#f4f4f4" textLength="23.20" lengthAdjust="spacingAndGlyphs" stroke="#f4f4f4" stroke-width="0.22">Radial</text><text x="184.50" y="858.90" font-family="Liberation Sans, sans-serif" font-size="8.8" fill="#f4f4f4" textLength="28.21" lengthAdjust="spacingAndGlyphs" stroke="#f4f4f4" stroke-width="0.22">Ranges</text>
<text x="229.50" y="849.00" font-family="Liberation Sans, sans-serif" font-size="8.8" fill="#f4f4f4" textLength="28.20" lengthAdjust="spacingAndGlyphs" stroke="#f4f4f4" stroke-width="0.22">Cardiac</text><text x="233.82" y="858.90" font-family="Liberation Sans, sans-serif" font-size="8.8" fill="#f4f4f4" textLength="19.55" lengthAdjust="spacingAndGlyphs" stroke="#f4f4f4" stroke-width="0.22">Mask</text>
<text x="139.60" y="904.00" font-family="Liberation Sans, sans-serif" font-size="8.8" fill="#777" textLength="28.20" lengthAdjust="spacingAndGlyphs" stroke="#777" stroke-width="0.22">Cardiac</text><text x="141.19" y="913.90" font-family="Liberation Sans, sans-serif" font-size="8.8" fill="#777" textLength="25.02" lengthAdjust="spacingAndGlyphs" stroke="#777" stroke-width="0.22">Planes</text>
<text x="189.04" y="904.00" font-family="Liberation Sans, sans-serif" font-size="8.8" fill="#777" textLength="19.11" lengthAdjust="spacingAndGlyphs" stroke="#777" stroke-width="0.22">Snap</text><text x="180.63" y="913.90" font-family="Liberation Sans, sans-serif" font-size="8.8" fill="#777" textLength="35.93" lengthAdjust="spacingAndGlyphs" stroke="#777" stroke-width="0.22">Referen...</text>
<text x="234.96" y="904.00" font-family="Liberation Sans, sans-serif" font-size="8.8" fill="#777" textLength="17.29" lengthAdjust="spacingAndGlyphs" stroke="#777" stroke-width="0.22">Lock</text><text x="225.63" y="913.90" font-family="Liberation Sans, sans-serif" font-size="8.8" fill="#777" textLength="35.93" lengthAdjust="spacingAndGlyphs" stroke="#777" stroke-width="0.22">Referen...</text>
<text x="136.07" y="959.00" font-family="Liberation Sans, sans-serif" font-size="8.6" font-weight="bold" fill="#fff" textLength="35.26" lengthAdjust="spacingAndGlyphs" >Snapshot</text>
<text x="184.50" y="959.00" font-family="Liberation Sans, sans-serif" font-size="8.8" fill="#777" textLength="28.20" lengthAdjust="spacingAndGlyphs" stroke="#777" stroke-width="0.22">Cardiac</text><text x="185.41" y="968.90" font-family="Liberation Sans, sans-serif" font-size="8.8" fill="#777" textLength="26.38" lengthAdjust="spacingAndGlyphs" stroke="#777" stroke-width="0.22">FAST...</text>
<text x="233.37" y="959.00" font-family="Liberation Sans, sans-serif" font-size="8.8" fill="#777" textLength="20.46" lengthAdjust="spacingAndGlyphs" stroke="#777" stroke-width="0.22">FAST</text><text x="229.50" y="968.90" font-family="Liberation Sans, sans-serif" font-size="8.8" fill="#777" textLength="28.21" lengthAdjust="spacingAndGlyphs" stroke="#777" stroke-width="0.22">Ranges</text>
<text x="136.19" y="1014.00" font-family="Liberation Sans, sans-serif" font-size="8.8" fill="#777" textLength="35.02" lengthAdjust="spacingAndGlyphs" stroke="#777" stroke-width="0.22">Brain AC-</text><text x="148.02" y="1023.90" font-family="Liberation Sans, sans-serif" font-size="8.8" fill="#777" textLength="11.37" lengthAdjust="spacingAndGlyphs" stroke="#777" stroke-width="0.22">PC</text>
<text x="179.04" y="1014.00" font-family="Liberation Sans, sans-serif" font-size="8.6" font-weight="bold" fill="#fff" textLength="39.13" lengthAdjust="spacingAndGlyphs" >OpenApps</text>
<path d="M151.5,697.4 h5.2 l-2.6,2.8z" fill="#f2f2f2"/>
<path d="M241.4,697.4 h5.2 l-2.6,2.8z" fill="#f2f2f2"/>
<path d="M151.5,752.2 h5.2 l-2.6,2.8z" fill="#f2f2f2"/>
<path d="M196.0,752.2 h5.2 l-2.6,2.8z" fill="#777"/>
<path d="M151.5,972 h5.2 l-2.6,2.8z" fill="#f2f2f2"/>
<circle cx="157.4" cy="610.4" r="8.6" fill="none" stroke="#8a8a8a" stroke-width="1.5" stroke-dasharray="1.5 1.6"/>
<circle cx="150.9" cy="604.8" r="8.6" fill="#262626"/>
<circle cx="150.9" cy="604.8" r="4.8" fill="none" stroke="#f2f2f2" stroke-width="1.8"/><line x1="158.50" y1="604.80" x2="161.00" y2="604.80" stroke="#f2f2f2" stroke-width="1.9"/><line x1="156.27" y1="610.17" x2="158.04" y2="611.94" stroke="#f2f2f2" stroke-width="1.9"/><line x1="150.90" y1="612.40" x2="150.90" y2="614.90" stroke="#f2f2f2" stroke-width="1.9"/><line x1="145.53" y1="610.17" x2="143.76" y2="611.94" stroke="#f2f2f2" stroke-width="1.9"/><line x1="143.30" y1="604.80" x2="140.80" y2="604.80" stroke="#f2f2f2" stroke-width="1.9"/><line x1="145.53" y1="599.43" x2="143.76" y2="597.66" stroke="#f2f2f2" stroke-width="1.9"/><line x1="150.90" y1="597.20" x2="150.90" y2="594.70" stroke="#f2f2f2" stroke-width="1.9"/><line x1="156.27" y1="599.43" x2="158.04" y2="597.66" stroke="#f2f2f2" stroke-width="1.9"/>
<path d="M150.9,599.6 A5.2,5.2 0 0,1 150.9,610 Z" fill="#f2f2f2"/>
<circle cx="197.7" cy="606.8" r="4.8" fill="none" stroke="#f2f2f2" stroke-width="1.8"/><line x1="205.30" y1="606.80" x2="207.80" y2="606.80" stroke="#f2f2f2" stroke-width="1.9"/><line x1="203.07" y1="612.17" x2="204.84" y2="613.94" stroke="#f2f2f2" stroke-width="1.9"/><line x1="197.70" y1="614.40" x2="197.70" y2="616.90" stroke="#f2f2f2" stroke-width="1.9"/><line x1="192.33" y1="612.17" x2="190.56" y2="613.94" stroke="#f2f2f2" stroke-width="1.9"/><line x1="190.10" y1="606.80" x2="187.60" y2="606.80" stroke="#f2f2f2" stroke-width="1.9"/><line x1="192.33" y1="601.43" x2="190.56" y2="599.66" stroke="#f2f2f2" stroke-width="1.9"/><line x1="197.70" y1="599.20" x2="197.70" y2="596.70" stroke="#f2f2f2" stroke-width="1.9"/><line x1="203.07" y1="601.43" x2="204.84" y2="599.66" stroke="#f2f2f2" stroke-width="1.9"/>
<path d="M197.7,601.6 A5.2,5.2 0 0,1 197.7,612 Z" fill="#f2f2f2"/>
<circle cx="207" cy="616.2" r="5.2" fill="#262626"/>
<path d="M203,620.2 h5 a3,3 0 0,0 0,-6 h-3.4" fill="none" stroke="#f2f2f2" stroke-width="1.5"/><path d="M205.6,611.4 l-2.8,2.8 l2.8,2.8" fill="none" stroke="#f2f2f2" stroke-width="1.4"/>
<text x="234.90" y="617.40" font-family="Liberation Serif, serif" font-size="30" font-weight="bold" fill="#ffc800" textLength="17.40" lengthAdjust="spacingAndGlyphs" font-family="Liberation Serif, serif">T</text>
<path d="M1.5,7.5 C1.5,3 5,0 9.5,0 C13.5,0 16,2.6 16,6.6 L17.8,10.4 L16.2,11 L16.2,13.6 C16.2,15.2 15.2,15.8 13.4,15.8 L12.2,15.8 L12.2,19.5 L5.2,19.5 L5.2,14.8 C2.8,12.8 1.5,10.6 1.5,7.5Z" transform="translate(145.6,652.2) scale(0.86)" fill="#f2f2f2" />
<rect x="140.8" y="650.4" width="8.4" height="1.5" fill="#f2f2f2" />
<rect x="140.8" y="653.2" width="6.6" height="1.5" fill="#f2f2f2" />
<rect x="140.8" y="656" width="5" height="1.5" fill="#f2f2f2" />
<rect x="157.8" y="650.4" width="8.4" height="1.5" fill="#f2f2f2" />
<rect x="159.6" y="653.2" width="6.6" height="1.5" fill="#f2f2f2" />
<rect x="161.2" y="656" width="5" height="1.5" fill="#f2f2f2" />
<rect x="140.8" y="668" width="5" height="1.5" fill="#f2f2f2" />
<rect x="140.8" y="670.8" width="6.6" height="1.5" fill="#f2f2f2" />
<rect x="140.8" y="673.6" width="8.4" height="1.5" fill="#f2f2f2" />
<rect x="161.2" y="668" width="5" height="1.5" fill="#f2f2f2" />
<rect x="159.6" y="670.8" width="6.6" height="1.5" fill="#f2f2f2" />
<rect x="157.8" y="673.6" width="8.4" height="1.5" fill="#f2f2f2" />
<rect x="191.2" y="651" width="6.4" height="6.2" fill="#f2f2f2" />
<rect x="199.4" y="651" width="6.4" height="6.2" fill="#f2f2f2" />
<rect x="191.2" y="659" width="6.4" height="6.2" fill="#f2f2f2" />
<rect x="199.4" y="659" width="6.4" height="6.2" fill="#f2f2f2" />
<text x="190.10" y="672.00" font-family="Liberation Sans, sans-serif" font-size="9.4" fill="#f2f2f2" textLength="17.80" lengthAdjust="spacingAndGlyphs" >auto</text>
<g transform="translate(242,663.6) rotate(42)"><rect x="-14" y="-2.7" width="28" height="5.4" fill="#ffb400"/><rect x="-12.0" y="-2.7" width="0.9" height="1.8" fill="#6a4a00"/><rect x="-8.6" y="-2.7" width="0.9" height="2.6" fill="#6a4a00"/><rect x="-5.2" y="-2.7" width="0.9" height="1.8" fill="#6a4a00"/><rect x="-1.8000000000000007" y="-2.7" width="0.9" height="2.6" fill="#6a4a00"/><rect x="1.5999999999999996" y="-2.7" width="0.9" height="1.8" fill="#6a4a00"/><rect x="5.0" y="-2.7" width="0.9" height="2.6" fill="#6a4a00"/><rect x="8.399999999999999" y="-2.7" width="0.9" height="1.8" fill="#6a4a00"/><rect x="11.8" y="-2.7" width="0.9" height="2.6" fill="#6a4a00"/></g>
<circle cx="150.4" cy="714.9" r="7.4" fill="none" stroke="#ffc000" stroke-width="2"/>
<g fill="#f2f2f2"><rect x="157.6" y="725" width="1.6" height="3"/><rect x="160.7" y="722" width="1.6" height="6"/><rect x="163.8" y="724" width="1.6" height="4"/><rect x="157" y="728.8" width="9" height="1.1"/></g>
<circle cx="195.7" cy="713.8" r="9.4" fill="#505050"/><circle cx="194.6" cy="712.8" r="7.4" fill="#585858"/>
<g fill="#5c5c5c"><rect x="202.6" y="725" width="1.6" height="3"/><rect x="205.7" y="722" width="1.6" height="6"/><rect x="208.8" y="724" width="1.6" height="4"/><rect x="202" y="728.8" width="9" height="1.1"/></g>
<path d="M1.5,7.5 C1.5,3 5,0 9.5,0 C13.5,0 16,2.6 16,6.6 L17.8,10.4 L16.2,11 L16.2,13.6 C16.2,15.2 15.2,15.8 13.4,15.8 L12.2,15.8 L12.2,19.5 L5.2,19.5 L5.2,14.8 C2.8,12.8 1.5,10.6 1.5,7.5Z" transform="translate(234.4,707) scale(0.82)" fill="#4c4c4c" />
<path d="M241.5,709.5 c2,-3 6,-3 8,0 c1.5,3 -1,5 -4,5 c-3,0 -5,-2 -4,-5z" fill="#666"/>
<g transform="translate(249.4,722) rotate(-48)"><rect x="-2.4" y="-7" width="4.8" height="10" fill="#7a7a7a"/><path d="M-2.4,3 L0,7.4 L2.4,3Z" fill="#8a8a8a"/></g>
<path d="M1.5,7.5 C1.5,3 5,0 9.5,0 C13.5,0 16,2.6 16,6.6 L17.8,10.4 L16.2,11 L16.2,13.6 C16.2,15.2 15.2,15.8 13.4,15.8 L12.2,15.8 L12.2,19.5 L5.2,19.5 L5.2,14.8 C2.8,12.8 1.5,10.6 1.5,7.5Z" transform="translate(143.6,761) scale(0.8)" fill="#484848" />
<path d="M146,764.5 c2,-3 6,-3 8,0 c1.5,3 -1,5 -4,5 c-3,0 -5,-2 -4,-5z" fill="#555"/>
<path d="M155.6,779.6 L159.2,783.2 L165.6,776.4" fill="none" stroke="#666" stroke-width="1.6"/>
<path d="M1.5,7.5 C1.5,3 5,0 9.5,0 C13.5,0 16,2.6 16,6.6 L17.8,10.4 L16.2,11 L16.2,13.6 C16.2,15.2 15.2,15.8 13.4,15.8 L12.2,15.8 L12.2,19.5 L5.2,19.5 L5.2,14.8 C2.8,12.8 1.5,10.6 1.5,7.5Z" transform="translate(190.4,760.4) scale(1.0)" fill="#f2f2f2" />
<path d="M194,784.4 L204.8,772" stroke="#262626" stroke-width="3.4"/><path d="M194,784.4 L204.8,772" stroke="#d8d8d8" stroke-width="1.6"/>
<circle cx="193.4" cy="766.2" r="6" fill="#f4f4f4" stroke="#262626" stroke-width="3.2"/><circle cx="193.4" cy="766.2" r="6" fill="none" stroke="#e8e8e8" stroke-width="1.3"/>
<path d="M1.5,7.5 C1.5,3 5,0 9.5,0 C13.5,0 16,2.6 16,6.6 L17.8,10.4 L16.2,11 L16.2,13.6 C16.2,15.2 15.2,15.8 13.4,15.8 L12.2,15.8 L12.2,19.5 L5.2,19.5 L5.2,14.8 C2.8,12.8 1.5,10.6 1.5,7.5Z" transform="translate(233.6,760.6) scale(1.06)" fill="#7a7a7a" />
<rect x="230.8" y="766" width="25.6" height="1.8" fill="#fff" />
<rect x="240.2" y="759.6" width="1.8" height="25.6" fill="#fff" />
<defs><linearGradient id="sph" x1="0" y1="0" x2="0" y2="1"><stop offset="0" stop-color="#9a9a9a"/><stop offset="0.5" stop-color="#6a6a6a"/><stop offset="1" stop-color="#3a3a3a"/></linearGradient></defs>
<ellipse cx="153.6" cy="826.6" rx="10.4" ry="11" fill="url(#sph)"/>
<rect x="141" y="821.2" width="25.2" height="1.9" fill="#fff" />
<rect x="141" y="825.8" width="25.2" height="1.9" fill="#fff" />
<rect x="141" y="830.4" width="25.2" height="1.9" fill="#fff" />
<circle cx="198.6" cy="827" r="8.2" fill="#8a8a8a"/><circle cx="197.6" cy="826" r="6" fill="#969696"/>
<line x1="210.01" y1="828.72" x2="205.79" y2="836.02" stroke="#fff" stroke-width="1.7"/>
<line x1="202.82" y1="837.74" x2="194.38" y2="837.74" stroke="#fff" stroke-width="1.7"/>
<line x1="191.41" y1="836.02" x2="187.19" y2="828.72" stroke="#fff" stroke-width="1.7"/>
<line x1="187.19" y1="825.28" x2="191.41" y2="817.98" stroke="#fff" stroke-width="1.7"/>
<line x1="194.38" y1="816.26" x2="202.82" y2="816.26" stroke="#fff" stroke-width="1.7"/>
<line x1="205.79" y1="817.98" x2="210.01" y2="825.28" stroke="#fff" stroke-width="1.7"/>
<ellipse cx="243.6" cy="827" rx="11.8" ry="6.6" fill="#7e7e7e" stroke="#fff" stroke-width="1.9"/>
<g transform="translate(148,879.5) rotate(-35)" fill="none" stroke="#5a5a5a" stroke-width="1.3"><ellipse cx="0" cy="0" rx="6" ry="8.4" fill="#3e3e3e"/><path d="M0,-8.4 V8.4 M-6,0 H6"/></g>
<path d="M154,889.6 l5,-3 v6z M166,889.6 l-5,-3 v6z M160,883.6 l3,5 h-6z" fill="#4e4e4e"/>
<path d="M1.5,7.5 C1.5,3 5,0 9.5,0 C13.5,0 16,2.6 16,6.6 L17.8,10.4 L16.2,11 L16.2,13.6 C16.2,15.2 15.2,15.8 13.4,15.8 L12.2,15.8 L12.2,19.5 L5.2,19.5 L5.2,14.8 C2.8,12.8 1.5,10.6 1.5,7.5Z" transform="translate(190.6,870.8) scale(1.0)" fill="#3c3c3c" />
<path d="M190.5,874 L208,893 M208,873 L196,890" stroke="#5e5e5e" stroke-width="1.4"/>
<path d="M191.4,878 C188,884 188.5,889 192.5,893" fill="none" stroke="#2a6a8c" stroke-width="2.6"/><path d="M188,892.4 h7.6 l-0.6,-5.4z" fill="#2a6a8c"/>
<path d="M1.5,7.5 C1.5,3 5,0 9.5,0 C13.5,0 16,2.6 16,6.6 L17.8,10.4 L16.2,11 L16.2,13.6 C16.2,15.2 15.2,15.8 13.4,15.8 L12.2,15.8 L12.2,19.5 L5.2,19.5 L5.2,14.8 C2.8,12.8 1.5,10.6 1.5,7.5Z" transform="translate(233.6,870.6) scale(1.06)" fill="#404040" />
<rect x="233" y="875.8" width="23.4" height="1.6" fill="#5e5e5e" />
<rect x="240.4" y="870" width="1.6" height="25" fill="#5e5e5e" />
<rect x="231.2" y="886.2" width="6.6" height="6.4" fill="#6e6e6e" />
<path d="M232.6,886.2 v-1.6 a1.9,1.9 0 0,1 3.8,0 v1.6" fill="none" stroke="#6e6e6e" stroke-width="1.2"/>
<rect x="141" y="929.6" width="25.2" height="15.6" fill="#f2f2f2" />
<path d="M149,929.8 l1.6,-2.4 h7 l1.6,2.4z" fill="#f2f2f2"/>
<circle cx="153.8" cy="937.6" r="6.2" fill="#262626"/><circle cx="153.8" cy="937.6" r="5" fill="none" stroke="#f2f2f2" stroke-width="0.9"/><circle cx="153.8" cy="937.6" r="3.6" fill="#1c1c1c"/>
<rect x="143" y="931.6" width="3.4" height="1.4" fill="#262626" />
<path d="M190.6,930 a8,6 0 0,1 16,0z" fill="#4a4a4a"/>
<rect x="186.1" y="931.4" width="25" height="1.3" fill="#585858" />
<rect x="186.1" y="934.4" width="25" height="1.3" fill="#585858" />
<rect x="186.1" y="937.4" width="13" height="1.3" fill="#585858" />
<rect x="186.1" y="940.4" width="11" height="1.3" fill="#585858" />
<text x="186.40" y="949.60" font-family="Liberation Sans, sans-serif" font-size="8.6" fill="#555" textLength="15.60" lengthAdjust="spacingAndGlyphs" >auto</text>
<path d="M235.6,930 a8,6 0 0,1 16,0z" fill="#4a4a4a"/>
<rect x="231.1" y="931.4" width="25" height="1.3" fill="#585858" />
<rect x="231.1" y="934.4" width="25" height="1.3" fill="#585858" />
<rect x="231.1" y="937.4" width="13" height="1.3" fill="#585858" />
<rect x="231.1" y="940.4" width="11" height="1.3" fill="#585858" />
<text x="231.40" y="949.60" font-family="Liberation Sans, sans-serif" font-size="8.6" fill="#555" textLength="15.60" lengthAdjust="spacingAndGlyphs" >auto</text>
<ellipse cx="207" cy="942.4" rx="4.6" ry="6" fill="#3a3a3a" stroke="#5a5a5a" stroke-width="1" transform="rotate(-15 207 942)"/>
<path d="M244.6,938 h11 v11.6 h-6" fill="none" stroke="#585858" stroke-width="1.5"/>
<path d="M153.6,981.4 C149,977.6 143,982 143,992 C143,999 147,1004 150.6,1004 C152.4,1004 153,1003 153.6,1002 C154.2,1003 154.8,1004 156.6,1004 C160.2,1004 164.2,999 164.2,992 C164.2,982 158.2,977.6 153.6,981.4Z" fill="#5c5c5c"/>
<circle cx="188.8" cy="983" r="2.7" fill="#fff"/>
<circle cx="196.8" cy="983" r="2.7" fill="#fff"/>
<circle cx="204.8" cy="983" r="2.7" fill="#fff"/>
<circle cx="188.8" cy="991" r="2.7" fill="#fff"/>
<circle cx="188.8" cy="999" r="2.7" fill="#fff"/>
<circle cx="196.4" cy="990.4" r="2.4" fill="#fff"/><path d="M195.6,990.4 l4.6,3.4" stroke="#262626" stroke-width="1.2"/>
<path d="M197.6,991.6 l2.4,1.6 l1.4,3" fill="none" stroke="#fff" stroke-width="1.3"/><path d="M200.6,993.6 h10 l-1.6,6.8 h-6.4z" fill="#fff"/><path d="M202.6,1000.4 l0.4,1.6 h6" fill="none" stroke="#fff" stroke-width="1"/><circle cx="203.6" cy="1003.4" r="1" fill="#fff"/><circle cx="208" cy="1003.4" r="1" fill="#fff"/>
</g>
<g id="p_right">
<text x="1602.60" y="85.80" font-family="Liberation Sans, sans-serif" font-size="14" fill="#f4f4f4" textLength="34.40" lengthAdjust="spacingAndGlyphs" >Series</text>
<path d="M1805,76L1815,86M1815,76L1805,86" stroke="#f2f2f2" stroke-width="1.5" fill="none"/>
<rect x="1601" y="101" width="18" height="20" fill="#444" />
<rect x="1623.4" y="101" width="17.4" height="20" fill="#444" />
<rect x="1642.6" y="101" width="17.6" height="20" fill="#444" />
<path d="M1603.4,104.6 l4.2,3.4 l-4.2,3.4z" fill="#f2f2f2"/><path d="M1602.6,118.2 L1616.4,103.8" stroke="#e8e8e8" stroke-width="1.2"/><path d="M1610.2,115.2 h6.6 l-3.3,3.6z" fill="#f2f2f2"/>
<rect x="1627.6" y="105.7" width="2.6" height="2.6" fill="#f2f2f2" />
<rect x="1627.6" y="109.4" width="2.6" height="2.6" fill="#f2f2f2" />
<rect x="1627.6" y="113.10000000000001" width="2.6" height="2.6" fill="#f2f2f2" />
<rect x="1631.3" y="105.7" width="2.6" height="2.6" fill="#f2f2f2" />
<rect x="1631.3" y="109.4" width="2.6" height="2.6" fill="#f2f2f2" />
<rect x="1631.3" y="113.10000000000001" width="2.6" height="2.6" fill="#f2f2f2" />
<rect x="1635.0" y="105.7" width="2.6" height="2.6" fill="#f2f2f2" />
<rect x="1635.0" y="109.4" width="2.6" height="2.6" fill="#f2f2f2" />
<rect x="1635.0" y="113.10000000000001" width="2.6" height="2.6" fill="#f2f2f2" />
<path d="M1647.4,108.6 h8 l-4,4.6z" fill="#f2f2f2"/>
<rect x="1788" y="103" width="8.6" height="4.2" fill="#f2f2f2" />
<rect x="1797.8" y="103" width="8.6" height="4.2" fill="#f2f2f2" />
<rect x="1788" y="108.6" width="8.6" height="2.6" fill="#f2f2f2" />
<rect x="1797.8" y="108.6" width="8.6" height="2.6" fill="#f2f2f2" />
<rect x="1788" y="112.4" width="8.6" height="2.6" fill="#f2f2f2" />
<rect x="1797.8" y="112.4" width="5.6" height="2.6" fill="#f2f2f2" />
<rect x="1788" y="116.2" width="8.6" height="2.6" fill="#f2f2f2" />
<rect x="1797.8" y="116.2" width="5.6" height="2.6" fill="#f2f2f2" />
<path d="M1804,115.4 h6.4 v9.6 h-6.4" fill="none" stroke="#f2f2f2" stroke-width="1.4"/><path d="M1800.4,120.2 h5.6 m-2.2,-2.2 l2.4,2.2 l-2.4,2.2" fill="none" stroke="#f2f2f2" stroke-width="1.2"/>
<text x="1778.20" y="135.40" font-family="Liberation Sans, sans-serif" font-size="8.8" fill="#f4f4f4" textLength="40.00" lengthAdjust="spacingAndGlyphs" stroke="#f4f4f4" stroke-width="0.22">Add Study</text>
<rect x="1807.6" y="159" width="12.6" height="891" fill="#0c0c0c" />
<rect x="1808.8" y="169" width="9.4" height="618.5" fill="#888" />
<path d="M1809.6,166.6 L1813.6,160.8 L1817.6,166.6Z" fill="#9a9a9a"/><path d="M1809.6,1041 L1813.6,1046.4 L1817.6,1041Z" fill="#9a9a9a"/>
<rect x="1597" y="167.6" width="210" height="41.6" fill="#333" />
<rect x="1610.9" y="172" width="59.4" height="16.6" rx="3" fill="none" stroke="#25b325" stroke-width="1.2"/>
<text x="1613.40" y="185.00" font-family="Liberation Sans, sans-serif" font-size="14.2" font-weight="bold" fill="#27d427" textLength="54.60" lengthAdjust="spacingAndGlyphs" >1/1/2021</text>
<text x="1772.20" y="184.80" font-family="Liberation Sans, sans-serif" font-size="8.8" fill="#b0b0b0" textLength="32.00" lengthAdjust="spacingAndGlyphs" >1:34 PM</text>
<path d="M1598.2,187.2 h6.2 l-3.1,3.4z" fill="#f2f2f2"/>
<text x="1612.60" y="203.20" font-family="Liberation Sans, sans-serif" font-size="11.6" fill="#a0a0a0" textLength="188.00" lengthAdjust="spacingAndGlyphs" >CT NM, NM CV MYOCARDIAL PERF...</text>
<rect x="1597" y="210.4" width="210" height="23" fill="#2f2f2f" />
<path d="M1609,220.6 h6.6 l-3.3,3.8z" fill="#4d8af0"/>
<text x="1619.60" y="227.20" font-family="Liberation Sans, sans-serif" font-size="12.6" fill="#4d8af0" textLength="59.40" lengthAdjust="spacingAndGlyphs" >SPECT•CT 1</text>
<rect x="1597" y="460" width="210" height="23" fill="#2f2f2f" />
<path d="M1609,470.2 h6.6 l-3.3,3.8z" fill="#4d8af0"/>
<text x="1619.60" y="476.80" font-family="Liberation Sans, sans-serif" font-size="12.6" fill="#4d8af0" textLength="59.40" lengthAdjust="spacingAndGlyphs" >SPECT•CT 2</text>
<clipPath id="tca"><rect x="1602" y="239" width="84" height="83"/></clipPath><rect x="1602" y="239" width="84" height="83" fill="#000"/><g clip-path="url(#tca)"><circle cx="1644.0" cy="280.5" r="46.5" fill="#2a2a2a"/><path d="M1617.0,295.0 Q1644.0,309.5 1671.0,295.0" fill="none" stroke="#8a8a8a" stroke-width="2.8" filter="url(#b1)"/><path d="M1613.4,287.0 C1616.0,276.0 1626.0,261.0 1638.0,260.0 L1650.0,260.0 C1662.0,261.0 1672.0,276.0 1675.0,287.0 C1675.0,292.0 1670.0,294.0 1664.0,295.5 C1654.0,298.4 1634.0,298.8 1624.0,295.5 C1618.0,294.0 1613.0,292.0 1613.4,287.0Z" fill="#fafafa" filter="url(#b1)"/><g filter="url(#b1)"><path d="M1625.5,282.5 C1627.0,289.0 1632.0,292.5 1638.0,291.5 C1636.0,288.0 1637.0,285.0 1638.0,283.0 C1635.0,288.0 1629.0,288.0 1625.5,282.5Z" fill="#555"/><path d="M1650.5,293.0 C1656.0,292.0 1661.0,288.0 1663.0,283.0 C1660.0,286.0 1657.0,286.0 1656.0,285.0 C1656.0,289.0 1653.0,292.0 1650.5,293.0Z" fill="#666"/><path d="M1629.0,269.5 c4,-3 8,-4.5 12,-4 l-3,4 c-1,-2 -5,-1.5 -9,0z" fill="#444"/><path d="M1658.5,271.5 l1.6,1 l-1.6,3.4 l-1,-1.6z" fill="#555"/></g></g>
<rect x="1602.5" y="239.5" width="83" height="82" fill="none" stroke="#4d8af0" stroke-width="1.2"/>
<clipPath id="tcb"><rect x="1703" y="239" width="84" height="83"/></clipPath><rect x="1703" y="239" width="84" height="83" fill="#fff"/><g clip-path="url(#tcb)"><ellipse cx="1745.0" cy="282.5" rx="24" ry="14" fill="#e4e4e4" filter="url(#b4)"/><ellipse cx="1733.0" cy="281.5" rx="5" ry="6.5" fill="#8a8a8a" filter="url(#b2)" transform="rotate(20 1733.0 281.5)"/><path d="M1747.0,278.5 c1,-6 8,-7 10,-2 c1,4 -2,8 -5,10" fill="none" stroke="#555" stroke-width="2.4" filter="url(#b1)"/></g>
<rect x="1703.5" y="239.5" width="83" height="82" fill="none" stroke="#4d8af0" stroke-width="1.2"/>
<text x="1603.50" y="331.30" font-family="Liberation Sans, sans-serif" font-size="8.6" font-weight="bold" fill="#4d8af0" textLength="81.00" lengthAdjust="spacingAndGlyphs" >CT-AC 3.00 Qr40 S3</text><text x="1638.25" y="342.50" font-family="Liberation Sans, sans-serif" font-size="8.6" font-weight="bold" fill="#4d8af0" textLength="11.50" lengthAdjust="spacingAndGlyphs" >[6]</text>
<text x="1703.45" y="331.30" font-family="Liberation Sans, sans-serif" font-size="8.6" font-weight="bold" fill="#4d8af0" textLength="83.10" lengthAdjust="spacingAndGlyphs" >AC Recon Tomo Rest</text><text x="1739.10" y="342.50" font-family="Liberation Sans, sans-serif" font-size="8.6" font-weight="bold" fill="#4d8af0" textLength="11.80" lengthAdjust="spacingAndGlyphs" >[7]</text>
<clipPath id="tcc"><rect x="1602" y="351.6" width="84" height="83"/></clipPath><rect x="1602" y="351.6" width="84" height="83" fill="#fff"/><g clip-path="url(#tcc)"><ellipse cx="1642.0" cy="395.1" rx="30" ry="20" fill="#e6e6e6" filter="url(#b4)"/><path d="M1614.0,375.1 C1634.0,363.1 1659.0,365.1 1678.0,381.1" fill="none" stroke="#c4c4c4" stroke-width="2.5" filter="url(#b2)"/><ellipse cx="1632.0" cy="389.1" rx="6" ry="9" fill="#8e8e8e" filter="url(#b2)" transform="rotate(20 1632.0 389.1)"/><path d="M1645.0,387.1 c1,-6 8,-7 10,-2 c1,4 -2,8 -5,10" fill="none" stroke="#5a5a5a" stroke-width="2.4" filter="url(#b1)"/></g>
<text x="1607.70" y="444.50" font-family="Liberation Sans, sans-serif" font-size="9.2" fill="#a0a0a0" textLength="72.60" lengthAdjust="spacingAndGlyphs" >NoAC Recon Tomo</text><text x="1628.45" y="455.50" font-family="Liberation Sans, sans-serif" font-size="9.2" fill="#a0a0a0" textLength="31.10" lengthAdjust="spacingAndGlyphs" >Rest [8]</text>
<clipPath id="tcd"><rect x="1602" y="490" width="84" height="82"/></clipPath><rect x="1602" y="490" width="84" height="82" fill="#000"/><g clip-path="url(#tcd)"><circle cx="1644.0" cy="531.0" r="46.5" fill="#2a2a2a"/><path d="M1617.0,545.5 Q1644.0,560.0 1671.0,545.5" fill="none" stroke="#8a8a8a" stroke-width="2.8" filter="url(#b1)"/><path d="M1613.4,537.5 C1616.0,526.5 1626.0,511.5 1638.0,510.5 L1650.0,510.5 C1662.0,511.5 1672.0,526.5 1675.0,537.5 C1675.0,542.5 1670.0,544.5 1664.0,546.0 C1654.0,548.9 1634.0,549.3 1624.0,546.0 C1618.0,544.5 1613.0,542.5 1613.4,537.5Z" fill="#fafafa" filter="url(#b1)"/><g filter="url(#b1)"><path d="M1625.5,533.0 C1627.0,539.5 1632.0,543.0 1638.0,542.0 C1636.0,538.5 1636.0,535.5 1637.0,533.5 C1634.0,537.5 1629.0,537.5 1625.5,533.0Z" fill="#666"/><path d="M1650.5,543.5 C1656.0,542.5 1661.0,538.5 1663.0,535.5 C1660.0,538.5 1658.0,538.5 1657.0,536.5 C1656.0,539.5 1653.0,542.5 1650.5,543.5Z" fill="#666"/><path d="M1627.5,524.5 C1631.0,519.5 1635.0,517.0 1640.5,516.0 L1638.0,521.0 C1637.0,518.5 1631.0,521.5 1627.5,524.5Z" fill="#333"/><rect x="1637.5" y="529.7" width="11.5" height="1.6" fill="#111"/><path d="M1657.0,522.0 c3,-2 5,2 5.4,6 c0.4,3 -1,5 -2.4,5 c-2,-1 -4,-3 -4.4,-6 c-0.4,-2 0.4,-4 1.4,-5z" fill="#1a1a1a"/></g></g>
<rect x="1602.5" y="490.5" width="83" height="81" fill="none" stroke="#c8c8c8" stroke-width="1.1"/>
<clipPath id="tce"><rect x="1703" y="490" width="84" height="82"/></clipPath><rect x="1703" y="490" width="84" height="82" fill="#fff"/><g clip-path="url(#tce)"><ellipse cx="1745.0" cy="533.0" rx="24" ry="14" fill="#ececec" filter="url(#b4)"/><ellipse cx="1733.0" cy="532.0" rx="5" ry="6.5" fill="#bdbdbd" filter="url(#b2)" transform="rotate(20 1733.0 532.0)"/><path d="M1747.0,529.0 c1,-6 8,-7 10,-2 c1,4 -2,8 -5,10" fill="none" stroke="#9a9a9a" stroke-width="2.4" filter="url(#b1)"/></g>
<rect x="1703.5" y="490.5" width="83" height="81" fill="none" stroke="#4d8af0" stroke-width="1.2"/>
<text x="1611.00" y="582.40" font-family="Liberation Sans, sans-serif" font-size="9.2" fill="#a0a0a0" textLength="66.00" lengthAdjust="spacingAndGlyphs" >CT-AC 3.00 Qr40</text><text x="1622.10" y="593.40" font-family="Liberation Sans, sans-serif" font-size="9.2" fill="#a0a0a0" textLength="43.80" lengthAdjust="spacingAndGlyphs" >S3_01 [18]</text>
<text x="1713.90" y="582.40" font-family="Liberation Sans, sans-serif" font-size="8.6" font-weight="bold" fill="#4d8af0" textLength="63.00" lengthAdjust="spacingAndGlyphs" >AC Recon Tomo</text><text x="1723.75" y="593.40" font-family="Liberation Sans, sans-serif" font-size="8.6" font-weight="bold" fill="#4d8af0" textLength="43.30" lengthAdjust="spacingAndGlyphs" >Stress [19]</text>
<rect x="1604.2" y="603.3" width="79" height="78.8" fill="#fff" stroke="#555" stroke-width="0.8"/>
<rect x="1602.6" y="604.9" width="79" height="78.8" fill="#fff" stroke="#555" stroke-width="0.8"/>
<clipPath id="tcf"><rect x="1601" y="606.5" width="79" height="78.8"/></clipPath><rect x="1601" y="606.5" width="79" height="78.8" fill="#fff"/><g clip-path="url(#tcf)"><ellipse cx="1640.5" cy="647.9" rx="24" ry="14" fill="#ececec" filter="url(#b4)"/><ellipse cx="1628.5" cy="646.9" rx="5" ry="6.5" fill="#bdbdbd" filter="url(#b2)" transform="rotate(20 1628.5 646.9)"/><path d="M1642.5,643.9 c1,-6 8,-7 10,-2 c1,4 -2,8 -5,10" fill="none" stroke="#9a9a9a" stroke-width="2.4" filter="url(#b1)"/></g>
<circle cx="1674.6" cy="612.6" r="2.6" fill="#e4e4e4" stroke="#bbb" stroke-width="0.6"/>
<path d="M1689.2,641.4 l4.2,3.6 l-4.2,3.6z" fill="#f2f2f2"/>
<rect x="1698.8" y="599.8" width="90.2" height="109" fill="#888" />
<clipPath id="tcg"><rect x="1702.4" y="602" width="82.8" height="82.7"/></clipPath><rect x="1702.4" y="602" width="82.8" height="82.7" fill="#fff"/><g clip-path="url(#tcg)"><ellipse cx="1741.8000000000002" cy="645.35" rx="30" ry="20" fill="#f3f3f3" filter="url(#b4)"/><path d="M1713.8000000000002,625.35 C1733.8000000000002,613.35 1758.8000000000002,615.35 1777.8000000000002,631.35" fill="none" stroke="#e6e6e6" stroke-width="2.5" filter="url(#b2)"/><ellipse cx="1731.8000000000002" cy="639.35" rx="6" ry="9" fill="#d6d6d6" filter="url(#b2)" transform="rotate(20 1731.8000000000002 639.35)"/><path d="M1744.8000000000002,637.35 c1,-6 8,-7 10,-2 c1,4 -2,8 -5,10" fill="none" stroke="#adadad" stroke-width="2.4" filter="url(#b1)"/></g>
<rect x="1702.9" y="602.5" width="81.8" height="81.7" fill="none" stroke="#3f7df0" stroke-width="1.2"/>
<text x="1603.20" y="694.90" font-family="Liberation Sans, sans-serif" font-size="9.5" fill="#a8a8a8" textLength="62.20" lengthAdjust="spacingAndGlyphs" >AC Recon Gated</text><text x="1601.20" y="705.70" font-family="Liberation Sans, sans-serif" font-size="9.5" fill="#a8a8a8" textLength="66.20" lengthAdjust="spacingAndGlyphs" >Tomo Stress [21]</text>
<text x="1706.90" y="694.20" font-family="Liberation Sans, sans-serif" font-size="8.6" font-weight="bold" fill="#3f7df0" textLength="75.00" lengthAdjust="spacingAndGlyphs" >NoAC Recon Tomo</text><text x="1722.80" y="704.80" font-family="Liberation Sans, sans-serif" font-size="8.6" font-weight="bold" fill="#3f7df0" textLength="43.20" lengthAdjust="spacingAndGlyphs" >Stress [20]</text>
<rect x="1604.2" y="715.8" width="79" height="78.8" fill="#fff" stroke="#555" stroke-width="0.8"/>
<rect x="1602.6" y="717.4" width="79" height="78.8" fill="#fff" stroke="#555" stroke-width="0.8"/>
<clipPath id="tch"><rect x="1601" y="719" width="79" height="78.8"/></clipPath><rect x="1601" y="719" width="79" height="78.8" fill="#fff"/><g clip-path="url(#tch)"><ellipse cx="1638.5" cy="760.4" rx="30" ry="20" fill="#f3f3f3" filter="url(#b4)"/><path d="M1610.5,740.4 C1630.5,728.4 1655.5,730.4 1674.5,746.4" fill="none" stroke="#e6e6e6" stroke-width="2.5" filter="url(#b2)"/><ellipse cx="1628.5" cy="754.4" rx="6" ry="9" fill="#d6d6d6" filter="url(#b2)" transform="rotate(20 1628.5 754.4)"/><path d="M1641.5,752.4 c1,-6 8,-7 10,-2 c1,4 -2,8 -5,10" fill="none" stroke="#adadad" stroke-width="2.4" filter="url(#b1)"/></g>
<circle cx="1674.6" cy="725" r="2.6" fill="#e4e4e4" stroke="#bbb" stroke-width="0.6"/>
<path d="M1687.4,756 h6.4 l-3.2,3.4z" fill="#f2f2f2"/>
<text x="1601.80" y="807.80" font-family="Liberation Sans, sans-serif" font-size="9.2" fill="#a8a8a8" textLength="64.40" lengthAdjust="spacingAndGlyphs" >NoAC Recon G...</text>
<rect x="1598.5" y="825.5" width="207" height="226" fill="#242424" stroke="#3c3c3c" stroke-width="1"/>
<rect x="1793" y="826.5" width="10.6" height="223.5" fill="#0c0c0c" />
<rect x="1794" y="835" width="8.8" height="213.6" fill="#888" />
<path d="M1794.4,832.8 L1798.3,827.4 L1802.2,832.8Z" fill="#9a9a9a"/>
<clipPath id="tcs0"><rect x="1604.5" y="830.7" width="82.8" height="82.6"/></clipPath><rect x="1604.5" y="830.7" width="82.8" height="82.6" fill="#fff"/><g clip-path="url(#tcs0)"><ellipse cx="1643.9" cy="874.0" rx="30" ry="20" fill="#f3f3f3" filter="url(#b4)"/><path d="M1615.9,854.0 C1635.9,842.0 1660.9,844.0 1679.9,860.0" fill="none" stroke="#e6e6e6" stroke-width="2.5" filter="url(#b2)"/><ellipse cx="1633.9" cy="868.0" rx="6" ry="9" fill="#d6d6d6" filter="url(#b2)" transform="rotate(20 1633.9 868.0)"/><path d="M1646.9,866.0 c1,-6 8,-7 10,-2 c1,4 -2,8 -5,10" fill="none" stroke="#adadad" stroke-width="2.4" filter="url(#b1)"/></g>
<rect x="1679.5" y="832.7" width="6" height="7.5" fill="#e6e6e6"/>
<text x="1634.05" y="922.70" font-family="Liberation Sans, sans-serif" font-size="8.8" fill="#a0a0a0" textLength="9.30" lengthAdjust="spacingAndGlyphs" >00</text>
<clipPath id="tcs1"><rect x="1697" y="830.7" width="82.8" height="82.6"/></clipPath><rect x="1697" y="830.7" width="82.8" height="82.6" fill="#fff"/><g clip-path="url(#tcs1)"><ellipse cx="1736.4" cy="874.0" rx="30" ry="20" fill="#f3f3f3" filter="url(#b4)"/><path d="M1708.4,854.0 C1728.4,842.0 1753.4,844.0 1772.4,860.0" fill="none" stroke="#e6e6e6" stroke-width="2.5" filter="url(#b2)"/><ellipse cx="1726.4" cy="868.0" rx="6" ry="9" fill="#d6d6d6" filter="url(#b2)" transform="rotate(20 1726.4 868.0)"/><path d="M1739.4,866.0 c1,-6 8,-7 10,-2 c1,4 -2,8 -5,10" fill="none" stroke="#adadad" stroke-width="2.4" filter="url(#b1)"/></g>
<rect x="1772" y="832.7" width="6" height="7.5" fill="#e6e6e6"/>
<text x="1726.55" y="922.70" font-family="Liberation Sans, sans-serif" font-size="8.8" fill="#a0a0a0" textLength="9.30" lengthAdjust="spacingAndGlyphs" >01</text>
<clipPath id="tcs2"><rect x="1604.5" y="940" width="82.8" height="82.6"/></clipPath><rect x="1604.5" y="940" width="82.8" height="82.6" fill="#fff"/><g clip-path="url(#tcs2)"><ellipse cx="1643.9" cy="983.3" rx="30" ry="20" fill="#f3f3f3" filter="url(#b4)"/><path d="M1615.9,963.3 C1635.9,951.3 1660.9,953.3 1679.9,969.3" fill="none" stroke="#e6e6e6" stroke-width="2.5" filter="url(#b2)"/><ellipse cx="1633.9" cy="977.3" rx="6" ry="9" fill="#d6d6d6" filter="url(#b2)" transform="rotate(20 1633.9 977.3)"/><path d="M1646.9,975.3 c1,-6 8,-7 10,-2 c1,4 -2,8 -5,10" fill="none" stroke="#adadad" stroke-width="2.4" filter="url(#b1)"/></g>
<rect x="1679.5" y="942" width="6" height="7.5" fill="#e6e6e6"/>
<text x="1634.05" y="1032.00" font-family="Liberation Sans, sans-serif" font-size="8.8" fill="#a0a0a0" textLength="9.30" lengthAdjust="spacingAndGlyphs" >02</text>
<clipPath id="tcs3"><rect x="1697" y="940" width="82.8" height="82.6"/></clipPath><rect x="1697" y="940" width="82.8" height="82.6" fill="#fff"/><g clip-path="url(#tcs3)"><ellipse cx="1736.4" cy="983.3" rx="30" ry="20" fill="#f3f3f3" filter="url(#b4)"/><path d="M1708.4,963.3 C1728.4,951.3 1753.4,953.3 1772.4,969.3" fill="none" stroke="#e6e6e6" stroke-width="2.5" filter="url(#b2)"/><ellipse cx="1726.4" cy="977.3" rx="6" ry="9" fill="#d6d6d6" filter="url(#b2)" transform="rotate(20 1726.4 977.3)"/><path d="M1739.4,975.3 c1,-6 8,-7 10,-2 c1,4 -2,8 -5,10" fill="none" stroke="#adadad" stroke-width="2.4" filter="url(#b1)"/></g>
<rect x="1772" y="942" width="6" height="7.5" fill="#e6e6e6"/>
<text x="1726.55" y="1032.00" font-family="Liberation Sans, sans-serif" font-size="8.8" fill="#a0a0a0" textLength="9.30" lengthAdjust="spacingAndGlyphs" >03</text>
<g fill="none" stroke="#e0e0e0" stroke-width="1.2"><rect x="1626.4" y="1063" width="10.6" height="6.4"/><rect x="1624.4" y="1065.2" width="10.6" height="6.4" fill="#000"/><rect x="1622.4" y="1067.4" width="10.6" height="6.4" fill="#000"/></g><circle cx="1635" cy="1073.6" r="3.4" fill="#e0e0e0"/><path d="M1635,1071.6 v2.2 h1.8" stroke="#000" stroke-width="0.8" fill="none"/>
<rect x="1657" y="1060" width="17.6" height="15.4" fill="#3e3e3e" />
<rect x="1657" y="1075.4" width="17.6" height="2.4" fill="#1cf06a" />
<g fill="none" stroke="#e0e0e0" stroke-width="1.3"><rect x="1685.2" y="1069" width="9.6" height="6.4"/><rect x="1693" y="1061.6" width="7.6" height="5"/></g><rect x="1688.4" y="1076.2" width="3.4" height="1.2" fill="#e0e0e0" /><rect x="1687.4" y="1062.2" width="1.2" height="1.2" fill="#e0e0e0" /><rect x="1689.8" y="1062.2" width="1.2" height="1.2" fill="#e0e0e0" /><rect x="1687.4" y="1064.6" width="1.2" height="1.2" fill="#e0e0e0" />
<circle cx="1697.6" cy="1073.2" r="3.6" fill="#000" stroke="#e0e0e0" stroke-width="1.2"/><path d="M1695.2,1075.6 l4.8,-4.8" stroke="#e0e0e0" stroke-width="1.1"/>
<text x="1752.00" y="1072.00" font-family="Liberation Mono, sans-serif" font-size="12" fill="#e0e0e0" textLength="56.00" lengthAdjust="spacingAndGlyphs" >10:43 AM</text>
</g>
<g id="p_vp">
<defs>
<linearGradient id="cbc" x1="0" y1="0" x2="0" y2="1">
<stop offset="0" stop-color="#ffffff"/><stop offset="0.06" stop-color="#fffaf2"/><stop offset="0.126" stop-color="#ffd9a0"/>
<stop offset="0.175" stop-color="#ffa428"/><stop offset="0.21" stop-color="#ff9000"/><stop offset="0.273" stop-color="#e4704c"/>
<stop offset="0.332" stop-color="#d2509c"/><stop offset="0.381" stop-color="#b432e0"/><stop offset="0.43" stop-color="#9412ff"/>
<stop offset="0.485" stop-color="#8000ff"/><stop offset="0.528" stop-color="#5430f0"/><stop offset="0.587" stop-color="#4042d0"/>
<stop offset="0.646" stop-color="#3060b0"/><stop offset="0.705" stop-color="#108080"/><stop offset="0.764" stop-color="#0a6a60"/>
<stop offset="0.823" stop-color="#084840"/><stop offset="0.882" stop-color="#042420"/><stop offset="0.94" stop-color="#000"/><stop offset="1" stop-color="#000"/>
</linearGradient>
<linearGradient id="cbg" x1="0" y1="0" x2="0" y2="1"><stop offset="0" stop-color="#000"/><stop offset="1" stop-color="#fff"/></linearGradient>
</defs>
<rect x="694" y="586" width="191" height="469" fill="#fff" />
<rect x="886" y="586" width="191" height="469" fill="#fff" />
<rect x="1077" y="115" width="256" height="940" fill="#fff" />
<rect x="1334" y="115" width="254" height="940" fill="#fff" />
<rect x="885" y="586" width="1" height="469" fill="#8a8a8a" />
<rect x="1333" y="115" width="1" height="940" fill="#b0b0b0" />
<rect x="1588" y="65" width="1" height="990" fill="#7d7d7d" />
<rect x="693" y="115" width="2" height="471" fill="#565656" />
<rect x="311" y="585" width="383" height="1" fill="#4a4a4a" />
<rect x="694" y="585" width="383" height="1" fill="#9a9a9a" />
<rect x="1076" y="115" width="1" height="471" fill="#444" />
<rect x="312" y="117" width="381" height="2" fill="#d7336f" />
<rect x="312" y="583" width="381" height="2" fill="#d7336f" />
<rect x="696" y="117" width="380" height="2" fill="#6a35d6" />
<rect x="696" y="583" width="380" height="2" fill="#6a35d6" />
<rect x="312" y="588" width="381" height="2" fill="#f0803c" />
<rect x="312" y="1053" width="381" height="2" fill="#f0803c" />
<rect x="1079.5" y="117" width="251.5" height="936" fill="none" stroke="#0a9292" stroke-width="2" stroke-dasharray="2 1.6"/>
<rect x="1082.7" y="120" width="245.5" height="930" fill="none" stroke="#0a9292" stroke-width="1.6" rx="1.5"/>
</g>
<g id="p_img">
<defs>
<filter id="b1" x="-20%" y="-20%" width="140%" height="140%"><feGaussianBlur stdDeviation="1"/></filter>
<filter id="b2" x="-20%" y="-20%" width="140%" height="140%"><feGaussianBlur stdDeviation="2"/></filter>
<filter id="b3" x="-30%" y="-30%" width="160%" height="160%"><feGaussianBlur stdDeviation="3"/></filter>
<filter id="b4" x="-30%" y="-30%" width="160%" height="160%"><feGaussianBlur stdDeviation="4.5"/></filter>
<filter id="b6" x="-40%" y="-40%" width="180%" height="180%"><feGaussianBlur stdDeviation="6.5"/></filter>
<filter id="b10" x="-50%" y="-50%" width="200%" height="200%"><feGaussianBlur stdDeviation="10"/></filter>
<filter id="b16" x="-60%" y="-60%" width="220%" height="220%"><feGaussianBlur stdDeviation="16"/></filter>
<filter id="noise" x="0" y="0" width="100%" height="100%">
 <feTurbulence type="fractalNoise" baseFrequency="0.55" numOctaves="2" seed="3" result="n"/>
 <feColorMatrix in="n" type="matrix" values="0 0 0 0 0  0 0 0 0 0  0 0 0 0 0  0.9 0.9 0 0 -0.72" result="m"/>
 <feComposite in="m" in2="SourceAlpha" operator="in"/>
</filter>
<filter id="noise2" x="0" y="0" width="100%" height="100%">
 <feTurbulence type="fractalNoise" baseFrequency="0.35" numOctaves="2" seed="7" result="n"/>
 <feColorMatrix in="n" type="matrix" values="0 0 0 0 1  0 0 0 0 1  0 0 0 0 1  0.8 0.8 0 0 -0.68" result="m"/>
 <feComposite in="m" in2="SourceAlpha" operator="in"/>
</filter>
<clipPath id="c1"><rect x="311" y="284.5" width="382" height="131"/></clipPath>
<clipPath id="c1s"><rect x="434.5" y="294" width="144" height="94"/></clipPath>
<clipPath id="c2"><rect x="695" y="284.5" width="381" height="131"/></clipPath>
<clipPath id="c2s"><rect x="784.5" y="294" width="221" height="94"/></clipPath>
<clipPath id="c3"><rect x="311" y="628.5" width="382" height="382.5"/></clipPath>
<clipPath id="c3b"><path id="bodyA" d="M367.7,845 C370,815 380,795 391,778 C402,760 412,750 424,742 C440,731 455,726 470,725.6 L551,725.6 C568,728 580,735 593,746.7 C608,760 617,772 624,789 C634,810 643,828 644.3,846 C645,862 641,870 633,876 C615,890 595,899 573,904.5 C550,910 528,912 506,912 C484,912 462,907 440,900 C418,893 398,887 380,876 C371,869 367,860 367.7,845Z"/></clipPath>
</defs>
<g clip-path="url(#c1)">
<rect x="311" y="284.5" width="382" height="131" fill="#171717" />
<rect x="311" y="284.5" width="382" height="131" fill="#000" filter="url(#noise)" opacity="0.9"/>
<rect x="311" y="284.5" width="382" height="131" fill="#fff" filter="url(#noise2)" opacity="0.10"/>
<path d="M446.5,284 C436,305 424,330 416,352 C411,366 408,385 406.5,416 L586.6,416 L586.6,284Z" fill="#888888"/>
<clipPath id="c1u"><rect x="400" y="284" width="190" height="104"/></clipPath>
<path clip-path="url(#c1u)" d="M446.5,284 C436,305 424,330 416,352 C411,366 408,385 406.5,416 L586.6,416 L586.6,284Z" fill="#9a9a9a"/>
<g clip-path="url(#c1s)">
<path d="M446.5,284 C436,305 424,330 416,352 C411,366 408,385 406.5,416 L586.6,416 L586.6,284Z" fill="#9da7a6"/>
<rect x="545" y="294" width="34" height="58" fill="#9fc4c2" filter="url(#b4)"/>
</g>
<path d="M489,284 C470,300 452,325 446,354 C455,372 470,380 500,382 L560,375 C563,350 558,310 541.5,284Z" fill="#263535" filter="url(#b1)"/>
<path d="M489,284 C470,300 452,325 446,354 C455,372 470,380 500,382 L560,375 C563,350 558,310 541.5,284Z" fill="#9ab" filter="url(#noise2)" opacity="0.35"/>
<g clip-path="url(#c1s)">
<path d="M438,395 C438,372 447,350 467,340 C480,334 500,333 513,337 C536,344 557,360 563,395Z" fill="#55d6c4" filter="url(#b3)" opacity="0.95"/>
<path d="M445,395 C445,374 454,355 470,346.5 C482,341 500,340 511,343.5 C532,350 550,365 555.5,395Z" fill="#c58cff" filter="url(#b2)"/>
<path d="M458,382 C462,362 476,350 498,354 C520,352 540,366 546,386 C520,394 480,394 458,382Z" fill="#e8a0c8" filter="url(#b4)" opacity="0.75"/><g filter="url(#b3)" fill="#ffb04a"><ellipse cx="480" cy="356" rx="13" ry="5" transform="rotate(25 480 356)"/><ellipse cx="492" cy="364.5" rx="10" ry="5.5"/><ellipse cx="517" cy="364.5" rx="11" ry="6"/><ellipse cx="527" cy="378" rx="8" ry="7"/><ellipse cx="476" cy="378" rx="12" ry="4.5" transform="rotate(12 476 378)"/><ellipse cx="505" cy="385" rx="16" ry="4"/></g><ellipse cx="502.5" cy="354" rx="6" ry="5" fill="#c58cff" filter="url(#b2)"/><g filter="url(#b2)" fill="#ffd070"><ellipse cx="491" cy="364.5" rx="5" ry="3"/><ellipse cx="527" cy="378.5" rx="4" ry="4"/></g>
</g>
<ellipse cx="437.6" cy="411.5" rx="7" ry="6.5" fill="#0a0a0a" filter="url(#b1)"/>
<rect x="586.6" y="284" width="7.9" height="132" fill="#111" />
<rect x="594.3" y="284" width="1.7" height="132" fill="#a8a8a8" />
<rect x="596" y="284" width="7.9" height="132" fill="#161616" />
<rect x="603.9" y="284" width="2.1" height="132" fill="#a8a8a8" />
</g>
<g clip-path="url(#c2)">
<rect x="695" y="284.5" width="381" height="131" fill="#171717" />
<rect x="695" y="284.5" width="381" height="131" fill="#000" filter="url(#noise)" opacity="0.9"/>
<rect x="695" y="284.5" width="381" height="131" fill="#fff" filter="url(#noise2)" opacity="0.10"/>
<path d="M743.7,284 C745,300 746,315 748.7,330 C751,345 754,358 756.7,369.5 C759,385 760,400 761.6,416 L1011.4,416 C1014,400 1017,385 1021.3,369.5 C1025,355 1028,345 1031,330 C1034,315 1035,300 1036.2,284Z" fill="#888888"/>
<clipPath id="c2u"><rect x="695" y="284" width="381" height="104"/></clipPath>
<path clip-path="url(#c2u)" d="M743.7,284 C745,300 746,315 748.7,330 C751,345 754,358 756.7,369.5 C759,385 760,400 761.6,416 L1011.4,416 C1014,400 1017,385 1021.3,369.5 C1025,355 1028,345 1031,330 C1034,315 1035,300 1036.2,284Z" fill="#9c9c9c"/>
<g clip-path="url(#c2s)">
<path d="M743.7,284 C745,300 746,315 748.7,330 C751,345 754,358 756.7,369.5 C759,385 760,400 761.6,416 L1011.4,416 C1014,400 1017,385 1021.3,369.5 C1025,355 1028,345 1031,330 C1034,315 1035,300 1036.2,284Z" fill="#9da7a6"/>
<ellipse cx="915" cy="350" rx="50" ry="20" fill="#98cbc6" filter="url(#b6)" opacity="0.6"/>
<ellipse cx="955" cy="378" rx="50" ry="11" fill="#94cbc6" filter="url(#b6)" opacity="0.7"/><ellipse cx="890" cy="366" rx="22" ry="10" fill="#94cbc6" filter="url(#b6)" opacity="0.6"/>
</g>
<path d="M819.7,284 C815,293 811,302 808.7,311 C804,326 801,340 799,354 C812,340 832,336 849.5,350 C853,349 855,348 855.6,345.6 C859,340 859,336 857,331.6 C851,326 842,321 840,314 C842,308 850,306 855.6,303.4 C858,296 859.5,290 860.3,284Z" fill="#283838" filter="url(#b1)"/>
<path d="M916.6,284 C920,289 925,292 927.5,295.6 C928,302 924,307 924.4,312.8 C927,320 934,325 936.9,331.6 C944,332 952,333 958.8,336 C966,339 972,343 977.5,347 C976,337 973,328 969.7,319 C965,306 960,294 955.6,284Z" fill="#283838" filter="url(#b1)"/>
<path d="M878,284 L883.6,284 L882.6,299 L879.6,296Z" fill="#222" filter="url(#b1)"/>
<path d="M819.7,284 C815,293 811,302 808.7,311 C804,326 801,340 799,354 C812,340 832,336 849.5,350 C853,349 855,348 855.6,345.6 C859,340 859,336 857,331.6 C851,326 842,321 840,314 C842,308 850,306 855.6,303.4 C858,296 859.5,290 860.3,284Z" fill="#9ab" filter="url(#noise2)" opacity="0.3"/>
<path d="M916.6,284 C920,289 925,292 927.5,295.6 C928,302 924,307 924.4,312.8 C927,320 934,325 936.9,331.6 C944,332 952,333 958.8,336 C966,339 972,343 977.5,347 C976,337 973,328 969.7,319 C965,306 960,294 955.6,284Z" fill="#9ab" filter="url(#noise2)" opacity="0.3"/>
<g clip-path="url(#c2s)">
<path d="M787,395 C787,372 790,352 800,343 C808,336 816,333 823,333.5 C832,334 842,342 852,352 C862,362 870,374 871,395Z" fill="#55d6c4" filter="url(#b3)" opacity="0.95"/>
<path d="M793,395 C793,374 796,357 804,349 C810,343 817,340.5 823,341 C831,342 840,349 848,357 C857,366 863,378 864,395Z" fill="#c58cff" filter="url(#b2)"/>
<ellipse cx="826" cy="372" rx="24" ry="16" fill="#e8a0c8" filter="url(#b4)" opacity="0.7"/><g filter="url(#b3)" fill="#ffb04a"><ellipse cx="825" cy="368" rx="9" ry="8"/><ellipse cx="832.5" cy="361" rx="6" ry="4.5"/><ellipse cx="852.5" cy="383.5" rx="6" ry="5"/><ellipse cx="812" cy="381" rx="9" ry="5"/></g><g filter="url(#b2)"><ellipse cx="824.4" cy="369" rx="4" ry="3.5" fill="#ffd070"/><ellipse cx="838" cy="373" rx="5" ry="4.5" fill="#c58cff"/><ellipse cx="820" cy="358" rx="4" ry="3.5" fill="#c58cff"/></g>
<ellipse cx="915" cy="339" rx="14" ry="14" fill="#6ad8cc" filter="url(#b4)" opacity="0.9"/>
<ellipse cx="915" cy="339" rx="6" ry="8" fill="#b888ff" filter="url(#b3)" transform="rotate(25 915 339)"/>
<ellipse cx="892" cy="324" rx="7" ry="6" fill="#b0a0a8" filter="url(#b3)"/>
</g>
</g>
<g clip-path="url(#c3)">
<circle cx="502" cy="820" r="222" fill="#171717"/>
<g clip-path="url(#c3)"><circle cx="502" cy="820" r="222" fill="#000" filter="url(#noise)" opacity="0.8"/></g>
<circle cx="502" cy="820" r="222" fill="#fff" filter="url(#noise2)" opacity="0.07"/>
<path d="M381,890 C420,908 460,918 506,918 C552,918 590,908 627,890 C631,888 631,893 628,895 C590,918 550,929 506,929 C460,929 420,918 380,895 C377,893 378,888 381,890Z" fill="#141414" stroke="#c4c4c4" stroke-width="1.9"/>
<path d="M367.7,845 C370,815 380,795 391,778 C402,760 412,750 424,742 C440,731 455,726 470,725.6 L551,725.6 C568,728 580,735 593,746.7 C608,760 617,772 624,789 C634,810 643,828 644.3,846 C645,862 641,870 633,876 C615,890 595,899 573,904.5 C550,910 528,912 506,912 C484,912 462,907 440,900 C418,893 398,887 380,876 C371,869 367,860 367.7,845Z" fill="#909090"/>
<g clip-path="url(#c3b)">
<path d="M383,846 C385,815 395,795 406,780 C420,760 440,742 470,740 L551,740 C580,745 600,770 610,792 C620,812 628,830 629,846 C629,860 620,868 612,872 C590,886 550,897 506,897 C462,897 420,886 398,872 C388,866 383,858 383,846Z" fill="#969e9d" filter="url(#b2)"/>
<g filter="url(#b6)" fill="#8fd6cf" opacity="0.72"><ellipse cx="452" cy="812" rx="50" ry="58"/><ellipse cx="505" cy="782" rx="28" ry="18"/><ellipse cx="552" cy="845" rx="32" ry="10"/><ellipse cx="535" cy="773" rx="12" ry="10"/><ellipse cx="495" cy="870" rx="40" ry="14" opacity="0.45"/><ellipse cx="590" cy="820" rx="20" ry="30" opacity="0.25"/></g>
<path d="M571,776 C576,772 584,776 586,783 C587,789 580,792 574,790 C569,787 568,780 571,776Z" fill="#14201f" filter="url(#b1)"/>
<path d="M546.5,859 C558,866 572,866 583.5,861 C578,872 570,877 563,879 C552,881 542,880 533,878 C540,873 545,868 546.5,859Z" fill="#1f2b2b" filter="url(#b1)"/>
<path d="M420,853 C428,866 440,874 451,877 C460,879 468,874 472,866 C465,862 458,866 450,866 C440,864 430,860 420,853Z" fill="#1f2b2b" filter="url(#b1)"/>
<path d="M408,812 C406,785 420,762 445,760 C462,762 470,772 480,770 C495,764 510,770 519,780 C522,790 510,794 498,796 C488,800 486,815 486,830 C486,854 470,868 450,866 C425,864 410,842 408,812Z" fill="#55d6c4" filter="url(#b4)"/>
<path d="M413,812 C411,788 424,767 445,766 C460,767 468,777 480,776 C494,770 506,774 514,782 C515,788 506,790 496,792 C484,797 481,815 481,830 C481,850 468,862 450,860 C428,858 415,840 413,812Z" fill="#cc96ff" filter="url(#b3)"/>
<path d="M418,800 C420,782 440,776 458,784 C474,790 480,806 474,824 C470,846 452,856 436,850 C422,842 416,822 418,800Z" fill="#f0a0b8" filter="url(#b4)" opacity="0.8"/><g filter="url(#b3)" fill="#ffb050"><ellipse cx="456.6" cy="795.6" rx="7" ry="11" transform="rotate(20 456 795)"/><ellipse cx="441" cy="835" rx="8" ry="12" transform="rotate(-20 441 837)"/><ellipse cx="471" cy="809" rx="5" ry="13" transform="rotate(10 471 809)"/><ellipse cx="422" cy="806" rx="6" ry="16"/><ellipse cx="486.6" cy="795.6" rx="4" ry="3"/><ellipse cx="436" cy="815" rx="8" ry="10"/><ellipse cx="428" cy="840" rx="6" ry="8"/></g>
<g filter="url(#b2)" fill="#ffdf90"><ellipse cx="457" cy="795" rx="3" ry="5" transform="rotate(20 457 795)"/><ellipse cx="441.5" cy="838" rx="3" ry="5" transform="rotate(-20 441 838)"/></g>
<ellipse cx="548" cy="843" rx="14" ry="4" fill="#b79cf0" filter="url(#b3)" opacity="0.7"/>
</g>
</g>
</g>
<g id="p_img2">
<defs>
<clipPath id="c4"><rect x="716" y="790" width="134" height="53.2"/></clipPath>
<linearGradient id="f4" x1="0" y1="0" x2="1" y2="0"><stop offset="0" stop-color="#fff" stop-opacity="1"/><stop offset="0.18" stop-color="#fff" stop-opacity="0"/><stop offset="0.92" stop-color="#fff" stop-opacity="0"/><stop offset="1" stop-color="#fff" stop-opacity="1"/></linearGradient>
<clipPath id="c5"><rect x="886" y="750" width="175" height="140"/></clipPath>
<clipPath id="c6"><rect x="1084" y="125" width="234" height="920"/></clipPath>
<clipPath id="c7"><rect x="1334" y="125" width="240" height="920"/></clipPath>
<radialGradient id="dome" cx="0.5" cy="0.75" r="0.7"><stop offset="0" stop-color="#050505"/><stop offset="0.55" stop-color="#222"/><stop offset="1" stop-color="#5a5a5a"/></radialGradient>
</defs>
<g clip-path="url(#c4)">
<rect x="730" y="799" width="112" height="48" fill="#f1f1f1" filter="url(#b3)"/>
<ellipse cx="765" cy="838" rx="26" ry="8" fill="#c4c4c4" filter="url(#b3)"/>
<ellipse cx="771" cy="824" rx="9" ry="10" fill="#7e7e7e" filter="url(#b2)"/>
<ellipse cx="788" cy="822" rx="9.5" ry="12" fill="#c8c8c8" stroke="#6e6e6e" stroke-width="2.6" filter="url(#b1)" transform="rotate(-10 788 822)"/>
<ellipse cx="816" cy="843" rx="21" ry="26" fill="url(#dome)" filter="url(#b2)"/>
<rect x="716" y="790" width="134" height="54" fill="url(#f4)"/>
</g>
<g clip-path="url(#c5)">
<rect x="918" y="765" width="132" height="112" fill="#f8f8f8" filter="url(#b4)"/>
<g filter="url(#b6)" fill="#e6e6e6"><ellipse cx="952" cy="798" rx="18" ry="16"/><ellipse cx="994" cy="786" rx="9" ry="9"/><ellipse cx="1006" cy="836" rx="12" ry="28"/><ellipse cx="990" cy="870" rx="13" ry="7"/><ellipse cx="965" cy="830" rx="25" ry="30" opacity="0.5"/></g>
<ellipse cx="941.3" cy="825.3" rx="3.6" ry="2.8" fill="#111" filter="url(#b1)" transform="rotate(-15 941 825)"/>
</g>
<g clip-path="url(#c6)">
<ellipse cx="1206" cy="585" rx="80" ry="46" fill="#f2f2f2" filter="url(#b16)"/>
<ellipse cx="1206" cy="583" rx="52" ry="32" fill="#ededed" filter="url(#b10)"/>
<ellipse cx="1166.5" cy="575.5" rx="14.5" ry="21" fill="#949494" filter="url(#b4)" transform="rotate(25 1166 575)"/>
<path d="M1211,565 C1212,552 1222,544 1232,547 C1241,551 1240,566 1233,576 C1229,581 1224,583 1221,582" fill="none" stroke="#4a4a4a" stroke-width="4.2" stroke-linecap="round" filter="url(#b2)"/>
<path d="M1195,573 C1200,560 1206,552 1212,549" fill="none" stroke="#ccc" stroke-width="3" filter="url(#b2)"/>
<g filter="url(#b2)" stroke="#c8c8c8" stroke-width="2.5" fill="none"><path d="M1214,602 L1234,614"/><path d="M1226,592 L1240,600"/></g>
</g>
<g clip-path="url(#c7)">
<ellipse cx="1464" cy="592" rx="88" ry="58" fill="#f2f2f2" filter="url(#b16)"/>
<ellipse cx="1455" cy="585" rx="62" ry="42" fill="#ececec" filter="url(#b10)"/>
<path d="M1352,552 C1385,520 1425,499 1465,498 C1505,499 1545,520 1574,548" fill="none" stroke="#e2e2e2" stroke-width="3" filter="url(#b2)"/>
<path d="M1425,508 C1440,501 1452,498 1465,498 C1490,498 1512,504 1531,514" fill="none" stroke="#9a9a9a" stroke-width="5" filter="url(#b3)"/>
<ellipse cx="1426" cy="582" rx="25" ry="33" fill="#c2c2c2" filter="url(#b6)" transform="rotate(15 1425 582)"/>
<ellipse cx="1450" cy="552" rx="14" ry="8" fill="#c4c4c4" filter="url(#b4)" transform="rotate(-30 1450 552)"/>
<ellipse cx="1470.5" cy="543.5" rx="9.5" ry="5" fill="#000" filter="url(#b2)"/>
<ellipse cx="1470.5" cy="543.8" rx="7" ry="3" fill="#000"  filter="url(#b1)"/>
</g>
</g>
<g id="p_ov">
<line x1="512.5" y1="119" x2="512.5" y2="349" stroke="#5a32c8" stroke-width="1.25" />
<line x1="512.5" y1="388" x2="512.5" y2="583" stroke="#5a32c8" stroke-width="1.25" />
<path d="M487.5,242.5L512,242.5M507.3,239.9L512,242.5M507.3,245.1L512,242.5" stroke="#6a35d6" stroke-width="1.3" fill="none"/>
<path d="M487.5,477L512,477M507.3,474.4L512,477M507.3,479.6L512,477" stroke="#6a35d6" stroke-width="1.3" fill="none"/>
<line x1="311" y1="369.5" x2="493" y2="369.5" stroke="#e87a3a" stroke-width="1.2" />
<line x1="532" y1="369.5" x2="693" y2="369.5" stroke="#e87a3a" stroke-width="1.2" />
<path d="M410.7,394L410.7,370M408.1,374.7L410.7,370M413.3,374.7L410.7,370" stroke="#f0803c" stroke-width="1.3" fill="none"/>
<path d="M603,394L603,370M600.4,374.7L603,370M605.6,374.7L603,370" stroke="#f0803c" stroke-width="1.3" fill="none"/>
<text x="498.60" y="132.70" font-family="Liberation Sans, sans-serif" font-size="12" font-weight="bold" fill="#fff" textLength="7.80" lengthAdjust="spacingAndGlyphs" >H</text>
<text x="318.10" y="354.20" font-family="Liberation Sans, sans-serif" font-size="12" font-weight="bold" fill="#fff" textLength="7.80" lengthAdjust="spacingAndGlyphs" >A</text>
<rect x="676" y="186" width="10" height="274" fill="url(#cbc)"/><rect x="676.5" y="186.5" width="9" height="273" fill="none" stroke="#fff" stroke-width="1"/><rect x="677.4" y="190.7" width="7.2" height="4.6" fill="#9a9a9a"/><rect x="677.4" y="191.0" width="7.2" height="0.8" fill="#eee"/><rect x="677.4" y="192.6" width="7.2" height="0.8" fill="#eee"/><rect x="677.4" y="194.2" width="7.2" height="0.8" fill="#eee"/><rect x="677.4" y="320.0" width="7.2" height="4.6" fill="#9a9a9a"/><rect x="677.4" y="320.4" width="7.2" height="0.8" fill="#eee"/><rect x="677.4" y="322.0" width="7.2" height="0.8" fill="#eee"/><rect x="677.4" y="323.6" width="7.2" height="0.8" fill="#eee"/><rect x="677.4" y="450.1" width="7.2" height="4.6" fill="#9a9a9a"/><rect x="677.4" y="450.5" width="7.2" height="0.8" fill="#eee"/><rect x="677.4" y="452.1" width="7.2" height="0.8" fill="#eee"/><rect x="677.4" y="453.7" width="7.2" height="0.8" fill="#eee"/><rect x="677" y="455.3" width="8" height="3.7" fill="#000"/>
<line x1="830.5" y1="119" x2="830.5" y2="349" stroke="#c8306a" stroke-width="1.25" />
<line x1="830.5" y1="388" x2="830.5" y2="583" stroke="#c8306a" stroke-width="1.25" />
<path d="M855.5,242.5L831,242.5M835.7,245.1L831,242.5M835.7,239.9L831,242.5" stroke="#d7336f" stroke-width="1.3" fill="none"/>
<path d="M855.5,477L831,477M835.7,479.6L831,477M835.7,474.4L831,477" stroke="#d7336f" stroke-width="1.3" fill="none"/>
<line x1="695" y1="369.5" x2="811.5" y2="369.5" stroke="#e87a3a" stroke-width="1.2" />
<line x1="851" y1="369.5" x2="1076" y2="369.5" stroke="#e87a3a" stroke-width="1.2" />
<path d="M762.6,394L762.6,370M760.0,374.7L762.6,370M765.2,374.7L762.6,370" stroke="#f0803c" stroke-width="1.3" fill="none"/>
<path d="M954.5,394L954.5,370M951.9,374.7L954.5,370M957.1,374.7L954.5,370" stroke="#f0803c" stroke-width="1.3" fill="none"/>
<text x="881.60" y="132.70" font-family="Liberation Sans, sans-serif" font-size="12" font-weight="bold" fill="#fff" textLength="7.80" lengthAdjust="spacingAndGlyphs" >H</text>
<text x="701.60" y="354.20" font-family="Liberation Sans, sans-serif" font-size="12" font-weight="bold" fill="#fff" textLength="7.80" lengthAdjust="spacingAndGlyphs" >R</text>
<rect x="1059" y="186" width="10" height="273" fill="url(#cbc)"/><rect x="1059.5" y="186.5" width="9" height="272" fill="none" stroke="#fff" stroke-width="1"/><rect x="1060.4" y="190.6" width="7.2" height="4.6" fill="#9a9a9a"/><rect x="1060.4" y="191.0" width="7.2" height="0.8" fill="#eee"/><rect x="1060.4" y="192.6" width="7.2" height="0.8" fill="#eee"/><rect x="1060.4" y="194.2" width="7.2" height="0.8" fill="#eee"/><rect x="1060.4" y="319.5" width="7.2" height="4.6" fill="#9a9a9a"/><rect x="1060.4" y="319.9" width="7.2" height="0.8" fill="#eee"/><rect x="1060.4" y="321.5" width="7.2" height="0.8" fill="#eee"/><rect x="1060.4" y="323.1" width="7.2" height="0.8" fill="#eee"/><rect x="1060.4" y="449.2" width="7.2" height="4.6" fill="#9a9a9a"/><rect x="1060.4" y="449.6" width="7.2" height="0.8" fill="#eee"/><rect x="1060.4" y="451.2" width="7.2" height="0.8" fill="#eee"/><rect x="1060.4" y="452.8" width="7.2" height="0.8" fill="#eee"/><rect x="1060" y="454.4" width="8" height="3.6" fill="#000"/>
<line x1="447.5" y1="590" x2="447.5" y2="810" stroke="#c8306a" stroke-width="1.25" />
<line x1="447.5" y1="848.5" x2="447.5" y2="1053" stroke="#c8306a" stroke-width="1.25" />
<path d="M472,708L448,708M452.7,710.6L448,708M452.7,705.4L448,708" stroke="#d7336f" stroke-width="1.3" fill="none"/>
<path d="M472,942L448,942M452.7,944.6L448,942M452.7,939.4L448,942" stroke="#d7336f" stroke-width="1.3" fill="none"/>
<line x1="311" y1="829.5" x2="428.5" y2="829.5" stroke="#5a32c8" stroke-width="1.25" />
<line x1="466.7" y1="829.5" x2="693" y2="829.5" stroke="#5a32c8" stroke-width="1.25" />
<path d="M379.5,804.5L379.5,829M382.1,824.3L379.5,829M376.9,824.3L379.5,829" stroke="#6a35d6" stroke-width="1.3" fill="none"/>
<path d="M570.8,804.5L570.8,829M573.4,824.3L570.8,829M568.2,824.3L570.8,829" stroke="#6a35d6" stroke-width="1.3" fill="none"/>
<text x="498.60" y="603.30" font-family="Liberation Sans, sans-serif" font-size="12" font-weight="bold" fill="#fff" textLength="7.80" lengthAdjust="spacingAndGlyphs" >A</text>
<text x="318.10" y="823.60" font-family="Liberation Sans, sans-serif" font-size="12" font-weight="bold" fill="#fff" textLength="7.80" lengthAdjust="spacingAndGlyphs" >R</text>
<rect x="675.5" y="657" width="10" height="272" fill="url(#cbc)"/><rect x="676.0" y="657.5" width="9" height="271" fill="none" stroke="#fff" stroke-width="1"/><rect x="676.9" y="661.6" width="7.2" height="4.6" fill="#9a9a9a"/><rect x="676.9" y="662.0" width="7.2" height="0.8" fill="#eee"/><rect x="676.9" y="663.6" width="7.2" height="0.8" fill="#eee"/><rect x="676.9" y="665.2" width="7.2" height="0.8" fill="#eee"/><rect x="676.9" y="790.0" width="7.2" height="4.6" fill="#9a9a9a"/><rect x="676.9" y="790.4" width="7.2" height="0.8" fill="#eee"/><rect x="676.9" y="792.0" width="7.2" height="0.8" fill="#eee"/><rect x="676.9" y="793.6" width="7.2" height="0.8" fill="#eee"/><rect x="676.9" y="919.2" width="7.2" height="4.6" fill="#9a9a9a"/><rect x="676.9" y="919.6" width="7.2" height="0.8" fill="#eee"/><rect x="676.9" y="921.2" width="7.2" height="0.8" fill="#eee"/><rect x="676.9" y="922.8" width="7.2" height="0.8" fill="#eee"/><rect x="676.5" y="924.4" width="8" height="3.6" fill="#000"/>
<text x="785.80" y="603.30" font-family="Liberation Sans, sans-serif" font-size="12" font-weight="bold" fill="#111" textLength="7.80" lengthAdjust="spacingAndGlyphs" >H</text>
<text x="701.90" y="823.60" font-family="Liberation Sans, sans-serif" font-size="12" font-weight="bold" fill="#111" textLength="13.80" lengthAdjust="spacingAndGlyphs" >LP</text>
<text x="978.00" y="603.30" font-family="Liberation Sans, sans-serif" font-size="12" font-weight="bold" fill="#111" textLength="7.80" lengthAdjust="spacingAndGlyphs" >H</text>
<text x="893.70" y="823.60" font-family="Liberation Sans, sans-serif" font-size="12" font-weight="bold" fill="#111" textLength="15.60" lengthAdjust="spacingAndGlyphs" >RA</text>
<rect x="872" y="635" width="5.5" height="328" fill="url(#cbg)"/><rect x="872.5" y="635.5" width="4.5" height="327" fill="none" stroke="#000" stroke-width="1"/><rect x="873.6" y="636" width="2.3" height="326" fill="url(#cbg)" opacity="0.0"/><rect x="873" y="637.3" width="3.5" height="3.4" fill="#8a8a8a"/><rect x="873" y="638.6" width="3.5" height="0.7" fill="#e8e8e8"/><rect x="873" y="796.4" width="3.5" height="3.4" fill="#8a8a8a"/><rect x="873" y="797.7" width="3.5" height="0.7" fill="#e8e8e8"/><rect x="873" y="956.5" width="3.5" height="3.4" fill="#8a8a8a"/><rect x="873" y="957.8" width="3.5" height="0.7" fill="#e8e8e8"/>
<rect x="1063.5" y="644" width="5.5" height="328" fill="url(#cbg)"/><rect x="1064.0" y="644.5" width="4.5" height="327" fill="none" stroke="#000" stroke-width="1"/><rect x="1065.1" y="645" width="2.3" height="326" fill="url(#cbg)" opacity="0.0"/><rect x="1064.5" y="646.3" width="3.5" height="3.4" fill="#8a8a8a"/><rect x="1064.5" y="647.6" width="3.5" height="0.7" fill="#e8e8e8"/><rect x="1064.5" y="805.4" width="3.5" height="3.4" fill="#8a8a8a"/><rect x="1064.5" y="806.7" width="3.5" height="0.7" fill="#e8e8e8"/><rect x="1064.5" y="965.5" width="3.5" height="3.4" fill="#8a8a8a"/><rect x="1064.5" y="966.8" width="3.5" height="0.7" fill="#e8e8e8"/>
<text x="1201.10" y="132.70" font-family="Liberation Sans, sans-serif" font-size="12" font-weight="bold" fill="#111" textLength="7.80" lengthAdjust="spacingAndGlyphs" >A</text>
<text x="1085.10" y="587.30" font-family="Liberation Sans, sans-serif" font-size="12" font-weight="bold" fill="#111" textLength="7.80" lengthAdjust="spacingAndGlyphs" >R</text>
<text x="1456.10" y="132.70" font-family="Liberation Sans, sans-serif" font-size="12" font-weight="bold" fill="#111" textLength="7.80" lengthAdjust="spacingAndGlyphs" >A</text>
<text x="1340.60" y="587.30" font-family="Liberation Sans, sans-serif" font-size="12" font-weight="bold" fill="#111" textLength="7.80" lengthAdjust="spacingAndGlyphs" >R</text>
<rect x="1319.5" y="236" width="5.5" height="657" fill="url(#cbg)"/><rect x="1320.0" y="236.5" width="4.5" height="656" fill="none" stroke="#000" stroke-width="1"/><rect x="1321.1" y="237" width="2.3" height="655" fill="url(#cbg)" opacity="0.0"/><rect x="1320.5" y="242.3" width="3.5" height="3.4" fill="#8a8a8a"/><rect x="1320.5" y="243.6" width="3.5" height="0.7" fill="#e8e8e8"/><rect x="1320.5" y="560.9" width="3.5" height="3.4" fill="#8a8a8a"/><rect x="1320.5" y="562.2" width="3.5" height="0.7" fill="#e8e8e8"/><rect x="1320.5" y="881.5" width="3.5" height="3.4" fill="#8a8a8a"/><rect x="1320.5" y="882.8" width="3.5" height="0.7" fill="#e8e8e8"/>
<rect x="1575" y="236" width="5.5" height="657" fill="url(#cbg)"/><rect x="1575.5" y="236.5" width="4.5" height="656" fill="none" stroke="#000" stroke-width="1"/><rect x="1576.6" y="237" width="2.3" height="655" fill="url(#cbg)" opacity="0.0"/><rect x="1576" y="242.3" width="3.5" height="3.4" fill="#8a8a8a"/><rect x="1576" y="243.6" width="3.5" height="0.7" fill="#e8e8e8"/><rect x="1576" y="560.9" width="3.5" height="3.4" fill="#8a8a8a"/><rect x="1576" y="562.2" width="3.5" height="0.7" fill="#e8e8e8"/><rect x="1576" y="881.5" width="3.5" height="3.4" fill="#8a8a8a"/><rect x="1576" y="882.8" width="3.5" height="0.7" fill="#e8e8e8"/><g fill="none" stroke="#b8b8b8" stroke-width="0.7"><path d="M1312.5,346.8 h7.5 a1.6,1.6 0 0,1 0,3.2 h-7.5 M1313.5,348.4 h5"/><path d="M1314.9,364 l3,-4.4 v6 M1314.7,363.8 h4.6"/></g><g fill="none" stroke="#b8b8b8" stroke-width="0.7"><path d="M1568,346.8 h7.5 a1.6,1.6 0 0,1 0,3.2 h-7.5 M1569,348.4 h5"/><path d="M1570.4,364 l3,-4.4 v6 M1570.2,363.8 h4.6"/></g><g fill="none" stroke="#b8b8b8" stroke-width="0.7"><path d="M864.5,699.8 h7.5 a1.6,1.6 0 0,1 0,3.2 h-7.5 M865.5,701.4 h5"/><path d="M866.9,717 l3,-4.4 v6 M866.7,716.8 h4.6"/></g>
</g>
</svg>
</body></html>
